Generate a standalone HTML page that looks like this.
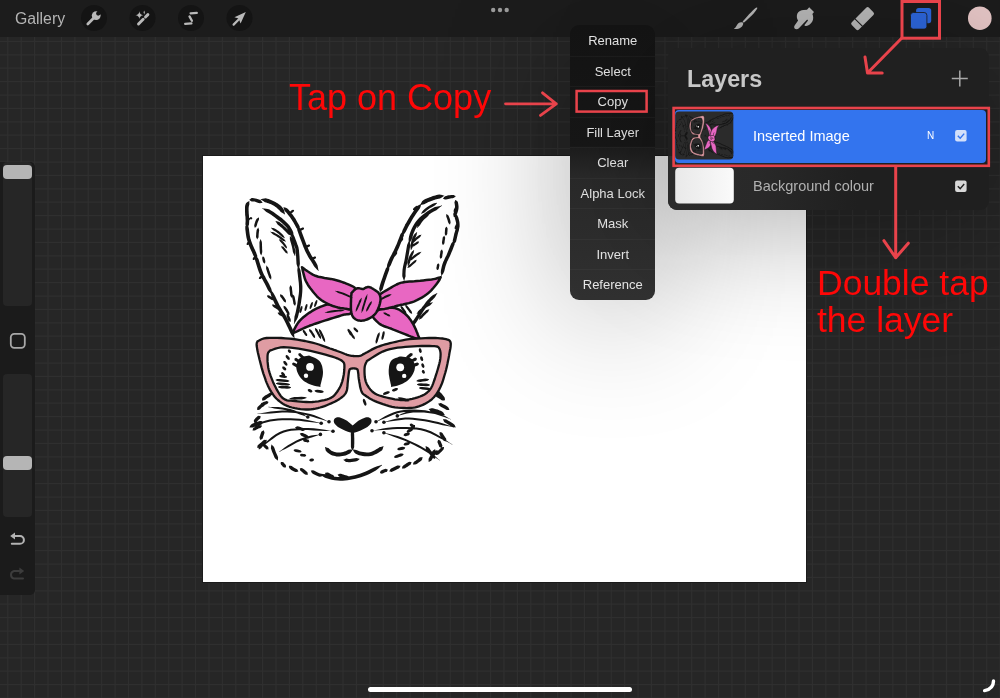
<!DOCTYPE html>
<html><head><meta charset="utf-8">
<style>
*{margin:0;padding:0;box-sizing:border-box}
html,body{width:1000px;height:698px;overflow:hidden;background:#262626;font-family:"Liberation Sans",sans-serif}
svg{position:absolute;left:0;top:0}
#canvas{position:absolute;left:203px;top:156px;width:603px;height:426px;background:#fff;box-shadow:0 0 0 1px #1b1b1b}
#topbar{position:absolute;left:0;top:0;width:1000px;height:37px;background:#1c1c1c}
.gal{position:absolute;left:15px;top:9.5px;font-size:15.8px;color:#b4b4b4}
#sidebar{position:absolute;left:0;top:162px;width:34.5px;height:432.5px;background:#1b1b1b;border-radius:0 5px 5px 0}
.track{position:absolute;left:3px;width:29px;background:#262626;border-radius:4px}
.thumb{position:absolute;left:3px;width:29px;height:14px;background:#b5b5b5;border-radius:4px}
#menu{position:absolute;left:569.5px;top:25px;width:85.5px;height:274.5px;border-radius:9px;overflow:hidden;
 background:linear-gradient(#141414 0,#171717 121px,#1d1d1d 123px,#292929 152px,#313131 274px);box-shadow:0 15px 130px rgba(0,0,0,.32)}
.mi{position:absolute;left:0;width:85.5px;height:30.5px;text-align:center;color:#e6e6e6;font-size:13px;line-height:30.5px;border-top:1px solid rgba(255,255,255,0.035)}
.mi:first-child{border-top:none}
#panel{position:absolute;left:667.5px;top:48px;width:321px;height:162px;border-radius:9px;background:#202020;box-shadow:0 15px 130px rgba(0,0,0,.32)}
.ptitle{position:absolute;left:19.7px;top:17.5px;font-size:23.3px;font-weight:bold;color:#c8c8c8}
#row1{position:absolute;left:7.7px;top:61.9px;width:310.8px;height:53.5px;background:#3374ee;border-radius:4px}
.lt{position:absolute;font-size:14.5px}
.ann{position:absolute;color:#ff0707;font-size:36px;line-height:36px;white-space:nowrap}
.gal,.mi,.lt,.ptitle,.ann{will-change:transform}
#home{position:absolute;left:368px;top:687px;width:264px;height:5px;border-radius:3px;background:#fff}
</style></head><body>
<svg width="1000" height="698"><path d="M7.80 0V698M21.21 0V698M34.62 0V698M48.03 0V698M61.44 0V698M74.85 0V698M88.26 0V698M101.67 0V698M115.08 0V698M128.49 0V698M141.90 0V698M155.31 0V698M168.72 0V698M182.13 0V698M195.54 0V698M208.95 0V698M222.36 0V698M235.77 0V698M249.18 0V698M262.59 0V698M276.00 0V698M289.41 0V698M302.82 0V698M316.23 0V698M329.64 0V698M343.05 0V698M356.46 0V698M369.87 0V698M383.28 0V698M396.69 0V698M410.10 0V698M423.51 0V698M436.92 0V698M450.33 0V698M463.74 0V698M477.15 0V698M490.56 0V698M503.97 0V698M517.38 0V698M530.79 0V698M544.20 0V698M557.61 0V698M571.02 0V698M584.43 0V698M597.84 0V698M611.25 0V698M624.66 0V698M638.07 0V698M651.48 0V698M664.89 0V698M678.30 0V698M691.71 0V698M705.12 0V698M718.53 0V698M731.94 0V698M745.35 0V698M758.76 0V698M772.17 0V698M785.58 0V698M798.99 0V698M812.40 0V698M825.81 0V698M839.22 0V698M852.63 0V698M866.04 0V698M879.45 0V698M892.86 0V698M906.27 0V698M919.68 0V698M933.09 0V698M946.50 0V698M959.91 0V698M973.32 0V698M986.73 0V698M1000.14 0V698M0 1.20H1000M0 14.60H1000M0 28.00H1000M0 41.40H1000M0 54.80H1000M0 68.20H1000M0 81.60H1000M0 95.00H1000M0 108.40H1000M0 121.80H1000M0 135.20H1000M0 148.60H1000M0 162.00H1000M0 175.40H1000M0 188.80H1000M0 202.20H1000M0 215.60H1000M0 229.00H1000M0 242.40H1000M0 255.80H1000M0 269.20H1000M0 282.60H1000M0 296.00H1000M0 309.40H1000M0 322.80H1000M0 336.20H1000M0 349.60H1000M0 363.00H1000M0 376.40H1000M0 389.80H1000M0 403.20H1000M0 416.60H1000M0 430.00H1000M0 443.40H1000M0 456.80H1000M0 470.20H1000M0 483.60H1000M0 497.00H1000M0 510.40H1000M0 523.80H1000M0 537.20H1000M0 550.60H1000M0 564.00H1000M0 577.40H1000M0 590.80H1000M0 604.20H1000M0 617.60H1000M0 631.00H1000M0 644.40H1000M0 657.80H1000M0 671.20H1000M0 684.60H1000M0 698.00H1000" stroke="#2f2f2f" stroke-width="1.25" fill="none"/></svg>
<div id="canvas"></div>
<svg width="1000" height="698" id="art"><defs><g id="bunny">
<path fill="#151515" d="M249.0,200.9L248.6,201.4L247.8,201.8L246.8,202.4L246.0,203.3L245.5,204.4L245.2,205.6L245.0,206.9L245.0,208.1L245.0,209.4L245.0,210.6L245.0,211.9L245.1,213.1L245.1,214.3L245.2,215.5L245.4,216.6L245.5,217.7L245.5,218.9L245.6,220.0L245.6,221.3L245.5,222.8L245.4,224.3L245.8,225.8L246.5,227.1L246.8,228.0L247.2,228.0L247.6,227.2L248.4,226.0L249.0,224.5L249.1,223.0L249.2,221.4L249.2,220.0L249.2,218.7L249.1,217.4L249.0,216.3L248.9,215.1L248.8,214.0L248.7,212.9L248.7,211.7L248.6,210.5L248.6,209.4L248.6,208.2L248.7,207.2L248.8,206.4L249.0,205.6L249.3,204.7L249.4,203.7L249.3,202.6L249.3,201.7L249.4,201.1ZM246.3,223.0L246.0,224.5L245.3,226.6L245.3,229.1L245.6,231.6L245.9,234.0L246.2,236.1L246.5,237.8L246.9,239.3L247.3,240.7L247.7,242.0L248.1,243.2L248.6,244.5L249.1,245.9L249.7,247.3L250.3,248.7L250.9,250.0L251.5,251.3L252.1,252.6L252.7,254.0L253.4,255.6L254.2,257.1L255.4,258.3L256.4,259.3L257.0,260.1L257.4,259.9L257.2,259.0L257.2,257.5L257.3,255.8L256.7,254.2L256.1,252.6L255.5,251.2L254.9,249.8L254.2,248.5L253.6,247.1L253.0,245.8L252.5,244.6L252.0,243.3L251.6,242.0L251.1,240.8L250.8,239.6L250.4,238.4L250.1,237.0L249.8,235.5L249.5,233.5L249.2,231.2L248.9,228.7L248.4,226.3L247.3,224.4L246.7,223.0ZM255.3,255.0L255.3,257.1L255.0,260.0L255.9,263.1L256.9,266.3L257.9,269.4L258.9,272.2L259.9,274.4L260.9,276.5L261.9,278.4L262.9,280.2L263.8,281.9L264.8,283.7L265.8,285.8L266.9,288.0L268.0,290.2L269.4,292.0L271.0,293.4L271.9,294.5L272.3,294.3L272.0,292.9L271.8,290.8L271.2,288.6L270.1,286.3L269.1,284.1L268.0,282.1L267.0,280.2L266.0,278.4L265.1,276.6L264.1,274.9L263.2,272.9L262.3,270.8L261.4,268.3L260.4,265.2L259.4,262.0L258.5,259.0L256.8,256.6L255.7,255.0ZM269.8,289.1L270.3,291.2L270.7,294.2L271.8,297.4L273.3,300.7L274.8,303.9L276.2,306.6L277.4,308.9L278.7,311.0L279.8,312.9L281.0,314.6L282.1,316.4L283.1,318.2L284.1,320.1L285.1,322.0L286.1,324.0L287.0,325.9L287.9,327.8L288.7,329.6L289.6,331.4L290.4,333.2L291.5,334.9L292.7,336.4L293.8,337.6L294.3,338.6L294.7,338.4L294.4,337.3L294.3,335.7L294.1,333.8L293.7,331.8L292.9,329.9L292.1,328.0L291.2,326.2L290.3,324.3L289.4,322.4L288.4,320.4L287.3,318.4L286.3,316.4L285.2,314.5L284.1,312.7L282.9,310.9L281.8,309.1L280.6,307.1L279.4,305.0L278.1,302.3L276.6,299.2L275.1,295.9L273.4,292.9L271.4,290.6L270.2,288.9ZM252.1,218.9L252.3,218.2L252.1,217.7L251.7,217.4L251.3,217.0L250.7,217.0L250.1,217.4L249.9,217.6L249.7,218.3L249.9,218.8L250.3,219.1L250.7,219.5L251.3,219.5L251.9,219.1ZM274.1,299.9L273.7,298.7L272.6,297.6L271.2,296.7L269.8,295.8L268.3,295.3L267.1,295.4L266.9,295.6L267.3,296.8L268.4,297.9L269.8,298.8L271.2,299.7L272.7,300.2L273.9,300.1ZM281.1,310.3L280.4,308.9L279.0,307.7L277.2,306.5L275.4,305.3L273.7,304.6L272.2,304.6L272.0,304.8L272.7,306.2L274.1,307.4L275.9,308.6L277.7,309.8L279.4,310.5L280.9,310.5ZM285.9,317.1L285.3,315.9L284.1,314.8L282.4,313.9L280.8,313.0L279.2,312.4L277.9,312.5L277.7,312.9L278.3,314.1L279.5,315.2L281.2,316.1L282.8,317.0L284.4,317.6L285.7,317.5ZM249.2,200.1L249.8,200.3L250.7,200.9L251.7,201.5L252.7,201.5L253.7,201.5L254.7,201.6L255.8,201.9L257.1,202.4L258.5,202.9L259.9,203.3L261.4,202.9L262.4,202.8L262.6,202.4L261.9,201.7L261.1,200.4L259.7,199.7L258.2,199.2L256.7,198.7L255.3,198.4L254.0,198.2L252.8,198.1L251.6,198.1L250.6,198.7L249.8,199.4L249.2,199.7ZM260.6,199.4L261.3,199.7L262.4,200.5L263.6,201.3L264.9,202.2L266.2,202.6L267.4,202.9L268.4,203.3L269.5,203.7L270.5,204.1L271.5,204.6L272.4,205.0L273.4,205.6L274.3,206.1L275.2,206.7L276.1,207.3L276.9,208.0L277.7,208.7L278.5,209.4L279.4,210.3L280.3,211.5L281.6,212.4L283.0,213.3L284.1,214.0L284.9,214.6L285.1,214.4L284.8,213.5L284.5,212.2L284.1,210.6L283.5,209.0L282.5,207.7L281.5,206.6L280.5,205.6L279.5,204.8L278.5,204.0L277.5,203.3L276.5,202.7L275.4,202.0L274.3,201.4L273.2,200.9L272.1,200.4L271.0,199.9L269.8,199.5L268.6,199.1L267.3,198.7L265.8,198.3L264.2,198.5L262.7,198.8L261.5,199.0L260.6,199.0ZM283.5,207.3L283.8,208.2L284.1,209.5L284.7,210.9L285.7,212.0L286.7,213.1L287.6,214.2L288.4,215.2L289.2,216.2L290.0,217.2L290.7,218.3L291.5,219.4L292.3,220.8L293.3,222.3L294.4,224.2L295.5,226.2L296.5,228.2L298.3,229.3L299.4,230.2L299.8,230.0L299.7,228.6L299.7,226.4L298.7,224.5L297.5,222.5L296.4,220.5L295.5,218.8L294.6,217.5L293.7,216.2L292.9,215.0L292.1,214.0L291.3,212.9L290.4,211.8L289.4,210.7L288.4,209.5L287.3,208.4L285.9,207.8L284.6,207.5L283.7,207.1ZM296.8,224.1L297.1,226.5L297.2,230.1L298.6,233.9L300.0,237.9L301.4,241.5L302.5,244.6L303.4,246.9L304.2,248.8L304.9,250.5L305.6,252.0L306.4,253.5L307.2,255.1L308.1,256.7L309.1,258.4L310.2,260.0L311.2,261.5L312.1,262.9L312.9,264.3L313.7,265.7L314.6,267.1L315.8,268.3L316.9,269.4L317.8,270.3L318.3,271.1L318.7,270.9L318.4,270.1L318.2,268.8L317.9,267.2L317.6,265.5L316.9,264.0L316.1,262.5L315.2,261.0L314.2,259.5L313.2,258.0L312.2,256.4L311.3,254.9L310.4,253.3L309.6,251.8L308.9,250.4L308.3,249.0L307.6,247.4L306.8,245.5L305.9,243.2L304.8,240.3L303.4,236.6L302.0,232.7L300.7,228.9L298.6,226.0L297.2,223.9ZM262.2,208.5L263.0,208.9L264.0,209.8L265.2,210.9L266.4,212.0L267.8,212.8L269.1,213.6L270.3,214.3L271.5,215.1L272.7,215.9L273.9,216.8L275.2,217.8L276.7,218.9L278.3,220.2L280.1,221.6L281.9,223.1L283.7,224.7L285.3,226.2L286.7,227.8L287.8,229.6L289.0,231.6L290.1,233.7L291.6,235.5L292.9,237.0L293.7,238.2L294.1,238.0L293.7,236.7L293.5,234.6L293.2,232.2L292.2,229.9L290.9,227.7L289.5,225.6L287.9,223.7L286.1,222.0L284.3,220.3L282.4,218.8L280.6,217.4L278.9,216.1L277.5,214.9L276.1,213.9L274.8,212.9L273.5,212.0L272.2,211.2L270.9,210.4L269.5,209.6L267.9,209.0L266.1,208.7L264.6,208.6L263.3,208.4L262.4,208.1ZM290.8,232.1L291.0,233.6L290.9,235.8L291.6,238.2L292.5,240.5L293.3,242.7L293.9,244.6L294.4,245.9L294.8,246.8L295.0,247.5L295.2,248.2L295.4,249.2L295.6,250.9L295.9,253.4L296.1,256.8L296.3,260.4L296.5,264.0L297.5,267.0L298.3,269.1L298.7,269.1L299.3,266.9L299.9,263.8L299.7,260.2L299.5,256.5L299.2,253.2L299.0,250.5L298.7,248.7L298.5,247.4L298.2,246.4L297.9,245.6L297.5,244.7L297.1,243.4L296.4,241.6L295.6,239.4L294.7,237.0L293.6,234.8L292.1,233.2L291.2,231.9ZM297.8,264.0L297.7,266.6L297.3,270.3L297.8,274.6L298.3,278.9L298.8,283.1L299.0,286.5L299.1,289.2L299.0,291.5L298.8,293.7L298.5,295.7L298.2,297.7L297.9,299.9L297.6,302.0L297.3,304.2L296.9,306.2L296.5,308.3L296.1,310.3L295.7,312.3L295.1,314.4L294.5,316.5L294.3,318.8L294.1,320.9L294.1,322.7L293.8,323.9L294.2,324.1L294.7,322.9L295.6,321.4L296.8,319.5L297.8,317.5L298.4,315.2L298.9,313.1L299.4,311.0L299.8,309.0L300.2,306.9L300.6,304.7L301.0,302.5L301.3,300.3L301.6,298.2L301.9,296.2L302.1,294.0L302.3,291.8L302.4,289.2L302.4,286.3L302.1,282.8L301.6,278.5L301.1,274.1L300.4,269.9L299.0,266.4L298.2,264.0ZM275.4,221.1L276.0,222.0L276.8,223.3L277.8,224.7L279.2,225.8L280.6,226.9L282.0,228.1L283.4,229.5L285.0,231.1L286.7,232.8L288.3,234.4L290.2,235.2L291.5,235.9L291.7,235.7L291.1,234.4L290.3,232.5L288.9,230.7L287.2,229.0L285.5,227.3L284.0,225.9L282.6,224.6L281.1,223.4L279.7,222.2L278.0,221.6L276.6,221.3L275.6,220.9ZM270.9,228.0L271.6,228.5L272.4,229.5L273.5,230.5L274.9,231.3L276.2,232.1L277.3,232.9L278.5,233.8L279.8,234.9L281.0,236.1L282.3,237.1L283.7,237.7L284.6,238.2L284.8,238.0L284.3,237.1L283.6,235.8L282.6,234.5L281.3,233.3L279.9,232.1L278.7,231.1L277.4,230.2L276.0,229.3L274.6,228.5L273.2,228.1L271.9,227.9L271.1,227.6ZM270.3,232.0L271.1,232.6L272.0,233.6L273.2,234.5L274.6,235.3L276.1,236.1L277.4,236.9L278.7,237.8L280.2,238.9L281.7,240.0L283.2,240.9L284.7,241.3L285.7,241.7L285.9,241.5L285.2,240.6L284.3,239.3L283.0,238.2L281.5,237.1L280.0,236.0L278.6,235.1L277.2,234.2L275.7,233.4L274.2,232.6L272.8,232.1L271.4,231.9L270.5,231.6ZM278.9,239.4L279.2,239.9L279.6,240.7L280.1,241.6L280.8,242.3L281.5,243.0L282.2,243.7L282.9,244.5L283.6,245.5L284.4,246.6L285.2,247.5L286.2,248.1L286.9,248.6L287.1,248.4L286.9,247.6L286.7,246.5L286.1,245.4L285.3,244.3L284.5,243.2L283.8,242.3L283.0,241.5L282.2,240.7L281.4,240.0L280.5,239.6L279.6,239.4L279.1,239.2ZM281.2,246.3L281.4,246.7L281.5,247.3L281.7,248.0L282.2,248.6L282.7,249.1L283.2,249.7L283.8,250.4L284.4,251.2L285.1,252.1L285.8,253.0L286.8,253.3L287.5,253.7L287.7,253.5L287.5,252.8L287.5,251.7L286.8,250.8L286.1,249.9L285.4,249.1L284.8,248.3L284.2,247.7L283.7,247.1L283.2,246.6L282.4,246.4L281.8,246.3L281.4,246.1ZM258.7,217.4L258.3,217.8L257.5,218.2L256.7,218.8L256.2,219.6L255.7,220.6L255.3,221.5L255.0,222.6L254.6,223.7L254.3,224.9L254.2,226.0L254.6,227.0L254.7,227.8L255.1,227.8L255.5,227.3L256.4,226.5L256.8,225.5L257.1,224.4L257.4,223.3L257.7,222.5L258.0,221.7L258.4,220.8L258.9,220.0L259.0,219.1L259.0,218.2L259.1,217.6ZM258.1,227.8L257.8,228.3L257.2,229.0L256.7,229.8L256.5,230.8L256.4,231.8L256.2,232.9L256.2,234.0L256.1,235.2L256.0,236.4L256.2,237.6L256.8,238.6L257.0,239.3L257.4,239.3L257.7,238.6L258.4,237.7L258.6,236.5L258.6,235.3L258.7,234.1L258.8,233.1L258.9,232.2L259.0,231.2L259.2,230.2L258.9,229.3L258.6,228.4L258.5,227.8ZM260.4,239.3L260.2,240.1L259.7,241.3L259.4,242.7L259.5,244.1L259.5,245.6L259.5,247.0L259.6,248.5L259.7,250.1L259.8,251.7L260.0,253.2L260.7,254.4L261.0,255.3L261.4,255.3L261.6,254.4L262.1,253.1L262.3,251.6L262.2,250.0L262.1,248.4L262.1,247.0L262.0,245.6L262.0,244.1L261.9,242.6L261.6,241.3L261.0,240.1L260.8,239.3ZM262.7,256.5L262.2,257.6L262.2,258.8L262.5,260.3L262.9,261.7L263.5,262.8L264.4,263.4L264.8,263.4L265.3,262.3L265.3,261.1L265.0,259.6L264.6,258.2L264.0,257.1L263.1,256.5ZM266.2,265.8L266.3,266.5L266.1,267.6L266.1,268.8L266.5,270.0L266.9,271.2L267.3,272.4L267.7,273.7L268.2,275.1L268.7,276.5L269.3,277.9L270.3,278.8L270.8,279.6L271.2,279.4L271.2,278.5L271.4,277.2L271.1,275.7L270.6,274.3L270.1,272.9L269.7,271.6L269.3,270.4L268.9,269.2L268.5,268.0L267.8,267.0L267.0,266.3L266.6,265.6ZM290.2,285.2L290.1,285.9L289.7,286.8L289.4,287.8L289.5,288.9L289.6,290.0L289.7,291.1L289.9,292.3L290.0,293.6L290.1,294.9L290.4,296.1L291.1,297.1L291.4,297.8L291.8,297.8L292.0,297.0L292.5,295.9L292.6,294.7L292.5,293.3L292.4,292.0L292.3,290.9L292.1,289.8L292.0,288.6L291.9,287.5L291.5,286.6L290.9,285.8L290.6,285.2ZM292.5,294.4L292.4,295.1L292.1,296.1L292.1,297.1L292.3,298.2L292.6,299.3L292.8,300.2L293.0,301.3L293.2,302.3L293.3,303.5L293.8,304.5L294.5,305.2L294.8,305.8L295.2,305.8L295.3,305.1L295.8,304.1L295.8,303.0L295.6,301.9L295.4,300.8L295.2,299.8L295.0,298.7L294.8,297.6L294.5,296.5L294.0,295.6L293.3,294.9L292.9,294.4ZM280.0,294.5L280.1,295.0L280.1,295.9L280.4,296.7L281.0,297.4L281.5,298.1L282.0,298.7L282.5,299.4L283.0,300.2L283.5,301.1L284.2,301.8L285.1,302.2L285.7,302.5L285.9,302.3L285.9,301.7L286.0,300.7L285.7,299.8L285.1,298.9L284.6,298.0L284.0,297.3L283.5,296.5L282.9,295.8L282.3,295.1L281.6,294.7L280.7,294.5L280.2,294.3ZM283.5,305.9L283.6,306.5L283.6,307.4L283.8,308.3L284.4,309.1L284.9,309.9L285.4,310.7L285.9,311.5L286.4,312.4L287.0,313.4L287.6,314.2L288.6,314.7L289.1,315.1L289.5,314.9L289.4,314.2L289.5,313.2L289.2,312.2L288.6,311.2L288.1,310.2L287.6,309.3L287.0,308.5L286.5,307.7L285.9,306.9L285.1,306.3L284.2,306.0L283.7,305.7ZM286.8,314.0L286.6,315.2L286.8,316.8L287.5,318.4L288.2,320.0L289.1,321.3L290.2,322.0L290.6,321.8L290.8,320.6L290.6,319.0L289.9,317.4L289.2,315.8L288.3,314.5L287.2,313.8ZM300.2,313.0L301.0,312.4L301.6,311.2L302.0,309.8L302.4,308.4L302.5,307.1L302.2,306.0L301.8,306.0L301.0,306.6L300.4,307.8L300.0,309.2L299.6,310.6L299.5,311.9L299.8,313.0ZM305.2,311.0L306.0,310.4L306.6,309.2L307.0,307.8L307.4,306.4L307.5,305.1L307.2,304.0L306.8,304.0L306.0,304.6L305.4,305.8L305.0,307.2L304.6,308.6L304.5,309.9L304.8,311.0ZM310.2,309.1L311.0,308.4L311.7,307.3L312.2,305.9L312.7,304.4L312.9,303.1L312.7,302.1L312.3,301.9L311.5,302.6L310.8,303.7L310.3,305.1L309.8,306.6L309.6,307.9L309.8,308.9ZM314.7,307.1L315.5,306.4L316.2,305.3L316.7,303.9L317.2,302.4L317.4,301.1L317.2,300.1L316.8,299.9L316.0,300.6L315.3,301.7L314.8,303.1L314.3,304.6L314.1,305.9L314.3,306.9ZM455.6,196.1L454.8,195.8L453.8,195.1L452.5,194.9L451.2,195.0L449.9,195.2L448.7,195.3L447.5,195.6L446.3,195.9L445.1,196.2L444.2,196.9L443.5,197.9L443.0,198.4L443.0,198.8L443.8,198.9L444.9,199.4L446.0,199.5L447.2,199.2L448.3,198.9L449.3,198.7L450.4,198.5L451.6,198.3L452.8,198.2L454.0,197.8L454.9,197.0L455.6,196.5ZM444.2,195.5L443.3,195.4L442.2,195.1L440.8,194.7L439.3,194.5L437.8,194.7L436.5,195.0L435.3,195.4L434.1,195.7L432.9,196.1L431.8,196.5L430.7,196.9L429.7,197.3L428.7,197.7L427.8,198.0L426.8,198.4L425.9,198.8L424.9,199.2L424.0,199.7L423.0,200.4L422.1,201.2L421.5,202.4L420.9,203.4L420.4,204.4L420.0,204.9L420.2,205.1L420.8,204.9L421.8,204.7L423.0,204.4L424.2,204.2L425.2,203.8L426.0,203.3L426.8,202.9L427.5,202.5L428.4,202.1L429.2,201.8L430.1,201.5L431.1,201.1L432.1,200.7L433.2,200.3L434.2,200.0L435.3,199.6L436.4,199.3L437.5,199.0L438.7,198.7L440.0,198.4L441.3,197.7L442.5,196.9L443.5,196.2L444.2,195.9ZM421.2,203.7L420.1,204.4L418.5,205.3L416.8,206.5L415.5,208.3L414.2,210.1L412.9,211.9L411.7,213.7L410.5,215.6L409.3,217.6L408.1,219.6L407.0,221.6L405.9,223.5L404.8,225.6L403.7,227.8L402.6,230.0L401.9,232.2L401.8,234.3L401.6,235.7L402.0,235.9L403.0,234.8L404.6,233.5L405.9,231.6L406.9,229.4L408.0,227.3L409.1,225.3L410.2,223.4L411.3,221.4L412.4,219.4L413.6,217.5L414.8,215.7L415.9,213.9L417.1,212.2L418.4,210.4L419.7,208.7L420.5,206.9L421.0,205.1L421.4,203.9ZM403.8,229.9L402.5,231.7L400.5,234.0L399.3,237.3L397.9,240.7L396.7,243.9L395.5,246.6L394.5,248.8L393.6,250.8L392.6,252.6L391.7,254.4L390.7,256.2L389.8,258.0L388.9,260.1L388.0,262.3L387.2,264.4L386.9,266.7L386.9,268.6L386.7,269.9L387.1,270.1L387.9,269.0L389.2,267.6L390.5,265.8L391.4,263.7L392.3,261.5L393.2,259.6L394.0,257.8L394.9,256.0L395.8,254.3L396.8,252.4L397.8,250.3L398.9,248.0L400.0,245.2L401.3,242.0L402.7,238.6L403.9,235.4L404.0,232.2L404.2,230.1ZM388.8,264.9L387.3,266.4L385.8,268.6L384.7,271.5L383.6,274.5L382.6,277.5L381.7,280.0L380.9,282.3L380.2,284.6L379.6,286.8L379.1,288.7L379.6,290.6L379.8,292.0L380.2,292.0L381.1,291.0L382.5,289.7L383.1,287.8L383.7,285.7L384.4,283.4L385.1,281.2L386.0,278.7L387.0,275.7L388.1,272.7L389.2,269.8L389.4,267.1L389.2,265.1ZM455.4,200.0L454.9,201.1L454.4,202.5L454.7,203.9L454.9,205.4L455.1,206.9L455.1,208.1L454.8,209.4L454.4,211.0L453.8,212.6L453.2,214.1L453.5,215.7L453.8,216.9L454.2,217.1L455.2,216.4L456.5,215.4L457.1,213.8L457.7,212.0L458.2,210.2L458.5,208.5L458.6,206.7L458.4,205.0L458.1,203.3L457.8,201.8L456.6,200.7L455.8,200.0ZM454.8,213.1L454.8,214.4L454.5,216.4L454.9,218.5L455.5,220.6L456.0,222.6L456.2,224.5L456.1,226.2L455.8,228.0L455.4,229.8L454.9,231.7L454.3,233.6L453.9,235.4L453.5,237.2L453.1,239.0L452.7,240.7L452.8,242.4L453.2,243.9L453.2,245.0L453.6,245.0L454.1,244.1L455.1,243.0L456.1,241.5L456.5,239.8L456.9,238.0L457.3,236.2L457.7,234.5L458.2,232.6L458.8,230.7L459.2,228.6L459.6,226.5L459.6,224.3L459.4,222.1L458.9,219.8L458.3,217.5L457.4,215.5L456.0,214.0L455.2,212.9ZM454.3,239.9L453.2,241.3L451.4,243.2L450.3,245.8L449.2,248.6L448.1,251.2L447.2,253.5L446.4,255.4L445.5,257.1L444.7,258.8L444.0,260.4L443.2,262.1L442.5,263.9L441.9,266.0L441.4,268.3L440.9,270.5L440.8,272.7L441.2,274.6L441.3,276.0L441.7,276.0L442.3,274.8L443.4,273.2L444.3,271.3L444.8,269.1L445.3,266.9L445.9,265.1L446.5,263.4L447.1,261.8L447.9,260.3L448.7,258.6L449.5,256.9L450.4,254.9L451.4,252.6L452.5,249.9L453.6,247.1L454.6,244.5L454.5,241.9L454.7,240.1ZM441.8,205.3L440.2,205.9L437.7,206.4L434.9,207.1L432.1,208.5L429.5,210.0L427.1,211.4L425.1,212.9L423.1,214.4L421.3,216.0L419.5,217.6L417.9,219.3L416.4,221.0L415.1,222.7L414.0,224.4L413.0,226.2L412.1,228.0L411.3,229.8L410.5,231.8L409.7,234.0L409.0,236.4L408.6,239.0L408.7,241.5L408.7,243.5L408.5,245.0L408.9,245.0L409.4,243.7L410.3,241.8L411.4,239.7L412.4,237.4L413.0,235.0L413.7,233.0L414.5,231.2L415.2,229.5L416.1,227.9L417.0,226.3L418.0,224.7L419.2,223.2L420.5,221.7L422.0,220.1L423.6,218.6L425.3,217.1L427.2,215.7L429.1,214.4L431.2,213.0L433.8,211.6L436.4,210.2L438.7,208.3L440.6,206.7L442.0,205.7ZM409.3,240.0L408.4,242.0L407.1,244.9L406.5,248.4L405.9,252.1L405.3,255.6L404.8,258.5L404.4,260.8L403.9,262.7L403.5,264.5L403.1,266.2L402.8,268.0L402.5,269.8L402.4,271.9L402.3,274.1L402.3,276.2L403.0,278.2L403.6,279.8L403.9,281.0L404.3,281.0L404.5,279.8L405.0,278.1L405.6,276.2L405.5,274.1L405.6,272.0L405.7,270.2L405.9,268.5L406.2,266.9L406.6,265.3L407.1,263.5L407.5,261.4L408.0,259.1L408.5,256.2L409.1,252.7L409.7,249.0L410.3,245.4L409.9,242.3L409.7,240.0ZM421.2,234.6L420.5,234.9L419.4,235.1L418.3,235.7L417.2,236.5L416.2,237.3L415.3,238.2L414.3,239.0L413.3,240.0L412.3,240.9L411.6,242.0L411.2,243.1L410.8,243.8L411.0,244.0L411.7,243.6L412.9,243.3L413.9,242.5L414.9,241.6L415.8,240.7L416.7,239.8L417.7,239.1L418.7,238.2L419.7,237.4L420.5,236.5L421.0,235.5L421.4,234.8ZM418.9,241.5L418.4,241.5L417.6,241.5L416.8,241.7L416.2,242.2L415.5,242.7L414.9,243.1L414.3,243.5L413.6,243.9L413.0,244.3L412.5,244.9L412.3,245.7L412.0,246.1L412.2,246.3L412.7,246.3L413.4,246.4L414.2,246.2L414.8,245.8L415.5,245.3L416.1,244.9L416.7,244.5L417.4,244.0L418.1,243.6L418.6,243.0L418.8,242.2L419.1,241.7ZM421.2,251.8L420.4,252.0L419.2,252.2L417.9,252.7L416.7,253.5L415.5,254.3L414.3,255.1L413.2,256.0L412.0,256.9L410.7,257.9L409.7,259.0L409.1,260.2L408.6,261.0L408.8,261.2L409.6,260.8L410.9,260.5L412.2,259.7L413.4,258.7L414.6,257.7L415.7,256.9L416.8,256.1L417.9,255.3L419.1,254.6L420.1,253.6L420.8,252.6L421.4,252.0ZM416.6,259.8L415.9,260.1L414.9,260.3L413.9,260.9L413.0,261.7L412.1,262.4L411.3,263.2L410.5,263.9L409.6,264.6L408.7,265.4L408.1,266.2L407.7,267.2L407.4,267.8L407.6,268.0L408.2,267.8L409.2,267.5L410.2,267.1L411.1,266.3L411.9,265.6L412.7,264.8L413.6,264.1L414.5,263.3L415.4,262.6L416.1,261.7L416.4,260.6L416.8,260.0ZM446.3,214.2L446.3,214.8L446.2,215.7L446.3,216.7L446.6,217.6L447.0,218.5L447.3,219.4L447.6,220.3L447.8,221.3L448.1,222.3L448.6,223.2L449.3,223.9L449.7,224.4L450.1,224.4L450.2,223.7L450.6,222.7L450.5,221.7L450.3,220.6L450.0,219.6L449.7,218.6L449.4,217.7L449.0,216.7L448.6,215.7L447.9,215.0L447.1,214.5L446.7,214.0ZM446.3,226.7L446.1,227.1L445.5,227.7L445.1,228.5L445.1,229.3L445.0,230.1L444.9,230.9L444.9,231.7L444.8,232.7L444.8,233.6L444.9,234.5L445.5,235.2L445.7,235.8L446.1,235.8L446.4,235.3L447.0,234.6L447.3,233.7L447.3,232.8L447.4,231.9L447.5,231.1L447.5,230.3L447.6,229.5L447.6,228.6L447.4,227.9L446.9,227.2L446.7,226.7ZM444.0,235.8L443.8,236.2L443.2,236.7L442.7,237.4L442.6,238.2L442.5,239.0L442.4,239.8L442.2,240.7L442.1,241.6L442.0,242.6L442.1,243.5L442.6,244.4L442.8,245.0L443.2,245.0L443.5,244.5L444.2,243.8L444.5,242.9L444.6,241.9L444.7,241.0L444.8,240.2L445.0,239.4L445.1,238.6L445.2,237.8L444.9,237.0L444.5,236.3L444.4,235.8ZM441.7,249.6L441.4,250.0L440.8,250.6L440.4,251.3L440.3,252.2L440.2,253.0L440.1,253.8L439.9,254.7L439.8,255.6L439.7,256.5L439.8,257.4L440.3,258.2L440.5,258.8L440.9,258.8L441.2,258.3L441.9,257.7L442.2,256.8L442.3,255.9L442.4,255.0L442.5,254.2L442.7,253.4L442.8,252.5L442.9,251.7L442.7,250.9L442.2,250.1L442.1,249.6ZM438.3,263.4L437.4,264.0L436.9,265.1L436.7,266.5L436.4,267.8L436.5,269.0L437.1,270.0L437.5,270.0L438.4,269.4L438.9,268.3L439.1,266.9L439.4,265.6L439.3,264.4L438.7,263.4ZM437.2,293.1L436.2,293.6L434.8,294.3L433.1,295.0L431.5,296.2L430.1,297.5L428.8,298.9L427.7,300.1L426.6,301.3L425.6,302.6L424.6,303.9L423.5,305.4L422.2,307.1L420.8,309.2L419.2,311.6L417.5,314.2L415.9,316.7L414.4,319.0L413.0,320.9L411.9,322.5L410.7,323.9L410.1,325.4L409.5,326.8L409.0,327.9L408.6,328.7L408.8,328.9L409.5,328.3L410.6,327.7L411.9,327.0L413.3,326.0L414.5,324.6L415.8,322.9L417.2,320.9L418.7,318.5L420.4,316.0L422.0,313.5L423.6,311.1L425.0,309.1L426.2,307.4L427.3,305.9L428.2,304.7L429.2,303.5L430.2,302.3L431.2,301.1L432.4,299.9L433.8,298.6L435.0,297.2L436.0,295.6L436.7,294.2L437.4,293.3ZM432.6,302.2L431.7,302.5L430.3,302.7L428.7,303.2L427.2,304.0L425.7,305.0L424.3,306.0L422.8,307.1L421.2,308.4L419.6,309.8L418.1,311.2L417.3,312.8L416.6,313.8L416.8,314.0L417.9,313.5L419.6,312.9L421.2,311.7L422.8,310.4L424.3,309.1L425.7,308.0L427.1,307.1L428.5,306.2L430.0,305.4L431.2,304.3L432.1,303.2L432.8,302.6ZM429.2,309.2L428.5,309.5L427.3,309.8L426.1,310.3L425.1,311.3L424.1,312.2L423.1,313.1L422.2,314.1L421.2,315.2L420.2,316.3L419.5,317.4L419.2,318.7L418.9,319.5L419.1,319.7L419.9,319.3L421.1,318.8L422.1,317.9L423.1,316.8L424.0,315.8L424.9,314.9L425.8,314.0L426.8,313.1L427.8,312.3L428.5,311.2L429.0,310.1L429.4,309.4ZM400.5,305.9L400.6,306.5L400.6,307.4L400.9,308.3L401.5,309.1L402.1,309.9L402.6,310.7L403.1,311.4L403.7,312.1L404.2,312.9L405.0,313.4L405.8,313.7L406.3,314.0L406.5,313.8L406.4,313.3L406.3,312.4L406.0,311.5L405.5,310.8L404.9,310.1L404.4,309.3L403.9,308.6L403.3,307.8L402.8,307.0L402.1,306.4L401.2,306.0L400.7,305.7ZM405.1,304.8L405.3,305.4L405.4,306.3L405.7,307.2L406.4,308.0L407.0,308.9L407.6,309.7L408.2,310.5L408.9,311.4L409.6,312.4L410.4,313.2L411.4,313.6L412.0,314.0L412.2,313.8L412.0,313.1L411.9,312.0L411.4,311.1L410.7,310.1L410.0,309.2L409.4,308.3L408.8,307.5L408.1,306.7L407.5,305.9L406.7,305.3L405.8,304.9L405.3,304.6ZM348.8,330.1L349.0,330.8L349.0,331.8L349.4,332.8L349.9,333.8L350.5,334.7L351.1,335.6L351.6,336.4L352.1,337.2L352.7,338.0L353.4,338.6L354.2,338.9L354.7,339.3L354.9,339.1L354.8,338.6L354.8,337.7L354.5,336.8L354.0,336.0L353.4,335.2L352.9,334.4L352.4,333.6L351.9,332.6L351.3,331.7L350.6,330.8L349.7,330.3L349.2,329.9ZM347.6,328.9L347.7,329.3L347.5,330.0L347.5,330.7L347.9,331.3L348.2,331.9L348.5,332.5L348.8,333.1L349.2,333.8L349.5,334.5L350.0,335.1L350.7,335.4L351.1,335.7L351.5,335.5L351.5,335.0L351.7,334.2L351.5,333.5L351.2,332.8L350.8,332.1L350.5,331.5L350.2,330.9L349.9,330.3L349.5,329.6L349.0,329.2L348.3,329.0L348.0,328.7ZM353.5,327.7L353.6,328.2L353.6,328.9L353.9,329.5L354.3,329.9L354.8,330.4L355.2,330.8L355.6,331.2L356.0,331.6L356.4,332.0L357.0,332.2L357.6,332.2L358.0,332.3L358.2,332.1L358.1,331.7L358.2,331.1L358.0,330.5L357.6,330.1L357.2,329.6L356.8,329.2L356.4,328.8L355.9,328.3L355.5,327.9L354.9,327.6L354.2,327.6L353.7,327.5ZM379.3,332.2L378.9,332.8L378.1,333.5L377.5,334.4L377.1,335.5L376.8,336.6L376.4,337.7L376.1,338.7L375.8,339.9L375.5,341.0L375.5,342.1L375.8,343.1L375.8,343.8L376.2,343.8L376.5,343.3L377.2,342.5L377.7,341.5L378.0,340.4L378.3,339.3L378.6,338.3L378.9,337.3L379.3,336.3L379.6,335.2L379.8,334.1L379.6,333.1L379.7,332.4ZM383.8,331.0L383.5,331.5L382.8,332.1L382.5,333.0L382.3,334.0L382.1,334.9L381.9,335.8L381.7,336.5L381.5,337.3L381.4,338.0L381.5,338.8L381.8,339.5L381.8,340.0L382.2,340.0L382.4,339.7L383.0,339.2L383.5,338.6L383.7,337.8L383.9,337.0L384.1,336.2L384.3,335.4L384.5,334.4L384.7,333.5L384.7,332.5L384.3,331.6L384.2,331.0ZM302.9,330.1L302.9,330.5L302.8,331.3L302.9,331.9L303.3,332.5L303.7,333.1L304.1,333.6L304.4,334.2L304.8,334.7L305.2,335.3L305.7,335.7L306.5,335.9L306.9,336.1L307.1,335.9L307.1,335.5L307.2,334.7L307.1,334.1L306.7,333.5L306.3,332.9L305.9,332.4L305.6,331.8L305.2,331.3L304.8,330.7L304.3,330.3L303.5,330.1L303.1,329.9ZM308.9,329.1L309.1,329.6L309.1,330.5L309.4,331.4L310.0,332.1L310.6,332.9L311.1,333.6L311.6,334.4L312.2,335.4L312.7,336.3L313.4,337.2L314.3,337.7L314.8,338.1L315.2,337.9L315.0,337.2L315.1,336.2L314.7,335.2L314.1,334.2L313.5,333.2L312.9,332.4L312.4,331.6L311.8,330.8L311.2,330.0L310.4,329.5L309.6,329.2L309.1,328.9ZM314.9,328.1L315.0,328.7L315.1,329.7L315.4,330.7L315.9,331.6L316.5,332.6L317.0,333.5L317.5,334.5L318.1,335.6L318.7,336.8L319.4,337.8L320.3,338.5L320.8,339.1L321.2,338.9L321.0,338.2L321.1,337.0L320.7,335.8L320.1,334.6L319.5,333.5L319.0,332.5L318.4,331.5L317.8,330.5L317.3,329.5L316.5,328.8L315.6,328.3L315.1,327.9ZM318.8,329.1L319.0,329.8L319.0,330.9L319.3,332.1L319.9,333.2L320.5,334.4L321.0,335.5L321.5,336.6L322.1,338.0L322.7,339.3L323.3,340.5L324.3,341.4L324.8,342.1L325.2,341.9L325.1,341.1L325.1,339.8L324.7,338.4L324.1,337.1L323.6,335.7L323.0,334.5L322.5,333.4L321.9,332.2L321.3,331.1L320.5,330.1L319.6,329.5L319.2,328.9ZM436.9,202.8L435.8,203.1L434.1,203.3L432.3,204.0L430.6,205.0L428.8,206.0L427.3,207.0L425.9,208.0L424.4,209.2L423.1,210.4L422.1,211.7L421.5,213.0L420.9,213.9L421.1,214.1L422.0,213.6L423.4,213.1L424.8,212.3L426.1,211.1L427.4,210.0L428.7,209.0L430.1,208.1L431.8,207.2L433.5,206.2L435.1,205.2L436.2,203.9L437.1,203.2ZM429.9,212.9L428.8,213.4L427.1,213.9L425.5,215.0L423.9,216.4L422.4,217.8L421.0,219.2L419.9,220.6L418.9,222.2L417.9,223.8L417.4,225.4L417.2,226.9L416.8,227.9L417.2,228.1L417.9,227.3L419.0,226.3L420.1,225.1L421.0,223.6L422.0,222.1L423.0,220.8L424.1,219.6L425.6,218.3L427.1,217.0L428.5,215.6L429.4,214.1L430.1,213.1ZM416.8,231.9L416.2,232.7L415.1,233.5L414.0,234.8L413.2,236.3L412.4,238.0L411.8,239.6L411.3,241.4L410.9,243.3L410.5,245.3L410.4,247.2L410.7,248.8L410.8,250.0L411.2,250.0L411.7,249.0L412.5,247.5L413.0,245.7L413.3,243.8L413.8,242.0L414.2,240.4L414.8,239.0L415.5,237.4L416.2,236.0L416.7,234.5L416.9,233.0L417.2,232.1ZM413.8,249.9L413.1,250.7L412.0,251.6L411.0,252.9L410.2,254.5L409.4,256.1L408.8,257.6L408.3,259.1L407.9,260.7L407.5,262.2L407.5,263.7L407.8,265.0L407.8,266.0L408.2,266.0L408.6,265.2L409.4,264.1L410.0,262.8L410.3,261.3L410.7,259.8L411.2,258.4L411.7,257.1L412.5,255.6L413.2,254.1L413.8,252.6L413.9,251.1L414.2,250.1ZM271.9,213.1L272.8,214.0L273.9,215.5L275.5,216.6L277.2,217.8L278.8,218.9L280.2,220.0L281.3,221.1L282.5,222.3L283.6,223.7L284.8,224.7L286.1,225.5L286.9,226.1L287.1,225.9L286.7,225.0L286.3,223.6L285.5,222.1L284.4,220.7L283.1,219.3L281.8,218.0L280.3,216.9L278.6,215.7L276.8,214.5L275.0,213.6L273.3,213.2L272.1,212.9ZM289.8,236.1L289.9,237.2L289.8,238.9L290.2,240.7L290.8,242.7L291.3,244.6L291.8,246.3L292.2,248.1L292.6,250.0L292.9,251.9L293.6,253.6L294.4,255.0L294.8,256.0L295.2,256.0L295.2,254.8L295.5,253.2L295.4,251.4L295.1,249.5L294.6,247.5L294.2,245.7L293.7,243.9L293.2,241.9L292.6,240.0L291.8,238.3L290.8,237.0L290.2,235.9ZM417.9,205.9L416.8,205.8L415.8,206.3L414.8,207.1L413.7,207.9L413.1,208.8L412.9,209.9L413.1,210.1L414.2,210.2L415.2,209.7L416.2,208.9L417.3,208.1L417.9,207.2L418.1,206.1ZM409.9,220.9L408.8,221.0L407.7,221.6L406.7,222.7L405.6,223.7L405.0,224.8L404.9,225.9L405.1,226.1L406.2,226.0L407.3,225.4L408.3,224.3L409.4,223.3L410.0,222.2L410.1,221.1ZM402.9,237.9L401.8,238.1L400.9,238.7L400.1,239.8L399.3,240.8L398.8,241.8L398.9,242.9L399.1,243.1L400.2,242.9L401.1,242.3L401.9,241.2L402.7,240.2L403.2,239.2L403.1,238.1ZM396.9,251.9L395.8,252.1L394.9,252.7L394.1,253.8L393.3,254.8L392.8,255.8L392.9,256.9L393.1,257.1L394.2,256.9L395.1,256.3L395.9,255.2L396.7,254.2L397.2,253.2L397.1,252.1ZM456.8,205.9L455.9,206.3L455.0,207.2L454.4,208.5L453.8,209.7L453.6,210.9L453.8,211.9L454.2,212.1L455.1,211.7L456.0,210.8L456.6,209.5L457.2,208.3L457.4,207.1L457.2,206.1ZM457.8,222.9L456.9,223.3L456.0,224.2L455.4,225.5L454.8,226.7L454.6,227.9L454.8,228.9L455.2,229.1L456.1,228.7L457.0,227.8L457.6,226.5L458.2,225.3L458.4,224.1L458.2,223.1ZM454.8,239.9L453.9,240.3L453.0,241.2L452.4,242.5L451.8,243.7L451.6,244.9L451.8,245.9L452.2,246.1L453.1,245.7L454.0,244.8L454.6,243.5L455.2,242.3L455.4,241.1L455.2,240.1ZM249.9,217.9L248.9,217.9L248.0,218.3L247.2,219.2L246.3,220.0L245.9,220.9L245.9,221.9L246.1,222.1L247.1,222.1L248.0,221.7L248.8,220.8L249.7,220.0L250.1,219.1L250.1,218.1ZM249.8,239.9L248.9,240.1L248.1,240.9L247.5,241.9L246.9,242.9L246.6,243.9L246.8,244.9L247.2,245.1L248.1,244.9L248.9,244.1L249.5,243.1L250.1,242.1L250.4,241.1L250.2,240.1ZM255.9,255.9L254.9,256.0L254.2,256.5L253.5,257.3L252.9,258.1L252.7,259.0L252.9,259.9L253.1,260.1L254.1,260.0L254.8,259.5L255.5,258.7L256.1,257.9L256.3,257.0L256.1,256.1ZM262.9,274.9L261.9,274.9L261.0,275.3L260.2,276.2L259.3,277.0L258.9,277.9L258.9,278.9L259.1,279.1L260.1,279.1L261.0,278.7L261.8,277.8L262.7,277.0L263.1,276.1L263.1,275.1ZM290.1,213.1L291.0,213.3L291.9,213.1L292.7,212.5L293.5,211.8L294.0,211.1L294.1,210.1L293.9,209.9L293.0,209.7L292.1,209.9L291.3,210.5L290.5,211.2L290.0,211.9L289.9,212.9ZM300.1,230.2L300.9,230.5L301.7,230.5L302.5,230.1L303.3,229.7L303.9,229.0L304.1,228.2L303.9,227.8L303.1,227.5L302.3,227.5L301.5,227.9L300.7,228.3L300.1,229.0L299.9,229.8ZM306.1,247.2L306.9,247.5L307.7,247.5L308.5,247.1L309.3,246.7L309.9,246.0L310.1,245.2L309.9,244.8L309.1,244.5L308.3,244.5L307.5,244.9L306.7,245.3L306.1,246.0L305.9,246.8ZM312.1,259.2L312.9,259.5L313.7,259.5L314.5,259.1L315.3,258.7L315.9,258.0L316.1,257.2L315.9,256.8L315.1,256.5L314.3,256.5L313.5,256.9L312.7,257.3L312.1,258.0L311.9,258.8Z"/>
<g fill="#e867c2" stroke="#151515" stroke-width="2.5" stroke-linejoin="round"><path d="M292.3,333.1L293.0,331.7L294.0,329.8L295.2,327.6L296.5,325.2L298.0,322.9L299.6,320.9L301.3,319.1L303.3,317.3L305.3,315.7L307.5,314.1L309.6,312.6L311.8,311.2L314.0,309.9L316.3,308.7L318.6,307.6L320.9,306.6L323.1,305.8L325.2,305.1L327.1,304.6L328.9,304.4L330.5,304.2L332.3,304.2L334.1,304.1L336.2,304.0L338.8,303.7L341.7,303.3L344.8,302.8L347.8,302.5L350.3,302.5L352.0,303.0L352.9,304.1L353.2,305.8L353.0,307.8L352.4,309.9L351.7,311.7L351.0,313.0L350.2,313.7L349.3,314.1L348.2,314.2L346.9,314.3L345.3,314.4L343.5,314.8L341.4,315.4L338.9,316.2L336.2,317.0L333.4,317.9L330.5,318.8L327.6,319.7L324.6,320.6L321.5,321.6L318.3,322.7L315.2,323.7L312.2,324.8L309.4,325.8L306.8,326.9L304.2,328.0L301.8,329.2L299.6,330.2L297.6,331.2L296.0,331.9L294.8,332.4L293.9,332.7L293.3,332.9L292.9,333.0L292.6,333.0L292.3,333.1Z"/><path d="M372.0,316.0L372.8,315.2L373.8,314.1L375.1,312.7L376.5,311.4L378.2,310.2L380.0,309.3L382.1,308.7L384.6,308.2L387.2,307.9L389.9,307.7L392.5,307.8L394.9,308.1L397.1,308.8L399.2,309.7L401.2,310.9L403.0,312.2L404.8,313.6L406.4,315.0L407.8,316.4L409.1,317.9L410.2,319.4L411.3,321.0L412.2,322.6L413.2,324.2L414.1,325.9L415.0,327.8L415.9,329.6L416.6,331.5L417.3,333.1L417.8,334.5L418.3,335.7L418.7,336.6L419.0,337.5L419.2,338.1L419.2,338.6L419.0,339.0L418.6,339.2L418.2,339.2L417.5,339.0L416.7,338.7L415.6,338.3L414.4,337.9L412.9,337.3L411.1,336.7L409.1,335.9L407.0,335.0L404.9,334.2L402.9,333.4L401.0,332.6L399.1,331.9L397.2,331.1L395.3,330.3L393.4,329.6L391.5,328.8L389.5,328.1L387.5,327.4L385.5,326.7L383.6,326.0L381.7,325.2L380.0,324.2L378.4,322.9L376.8,321.4L375.3,319.8L373.9,318.3L372.8,316.9L372.0,316.0Z"/><path d="M302.0,267.3L303.4,268.3L305.3,269.7L307.6,271.3L310.2,273.0L312.8,274.6L315.5,275.8L318.3,276.7L321.4,277.3L324.5,277.9L327.7,278.4L330.8,278.9L333.7,279.5L336.4,280.2L339.1,281.0L341.7,281.9L344.1,282.7L346.3,283.6L348.3,284.4L350.0,285.1L351.6,285.8L353.0,286.5L354.1,287.2L355.0,288.1L355.6,289.2L355.9,290.5L355.8,292.1L355.5,293.8L355.0,295.6L354.5,297.3L354.0,299.0L353.6,300.7L353.1,302.6L352.6,304.5L352.1,306.2L351.5,307.6L350.8,308.7L350.2,309.3L349.6,309.5L348.9,309.5L348.1,309.2L347.2,309.0L345.9,308.7L344.3,308.5L342.4,308.2L340.3,307.9L338.0,307.5L335.8,306.9L333.7,306.3L331.6,305.5L329.5,304.6L327.4,303.6L325.3,302.5L323.3,301.4L321.5,300.2L319.9,299.0L318.3,297.6L316.9,296.3L315.6,294.8L314.3,293.3L313.0,291.7L311.7,290.0L310.3,288.3L309.0,286.5L307.8,284.6L306.7,282.7L305.7,280.7L304.8,278.5L304.1,275.9L303.4,273.3L302.8,270.9L302.4,268.8L302.0,267.3Z"/><path d="M440.7,277.2L439.8,277.5L438.6,277.8L437.2,278.2L435.6,278.7L433.7,279.1L431.6,279.5L429.2,279.8L426.3,280.1L423.3,280.4L420.2,280.7L417.2,280.9L414.4,281.2L411.9,281.4L409.5,281.6L407.1,281.8L404.9,282.0L402.7,282.4L400.6,282.9L398.5,283.6L396.6,284.5L394.7,285.5L392.8,286.5L391.0,287.6L389.2,288.7L387.3,289.8L385.4,290.9L383.5,292.0L381.7,293.1L380.2,294.3L379.0,295.5L378.2,296.7L377.7,298.0L377.5,299.3L377.4,300.6L377.4,301.8L377.5,303.0L377.5,304.2L377.5,305.6L377.6,306.8L377.9,308.0L378.7,308.8L380.0,309.3L382.0,309.3L384.6,308.9L387.7,308.2L390.9,307.4L394.2,306.6L397.2,305.8L400.1,305.1L403.1,304.5L406.0,303.8L408.9,303.1L411.7,302.3L414.4,301.3L416.9,300.2L419.4,298.9L421.8,297.6L424.0,296.2L426.1,294.7L428.1,293.2L430.0,291.6L431.7,289.8L433.3,288.0L434.8,286.2L436.2,284.5L437.3,283.0L438.2,281.7L439.0,280.5L439.6,279.5L440.0,278.5L440.4,277.8L440.7,277.2Z"/><path d="M351.5,293.0L351.9,292.6L352.4,292.0L353.1,291.3L353.7,290.6L354.4,290.0L355.0,289.5L355.5,289.1L356.0,288.8L356.5,288.6L356.9,288.4L357.5,288.3L358.1,288.2L358.8,288.2L359.7,288.4L360.6,288.6L361.4,288.8L362.3,289.0L363.0,289.0L363.6,288.9L364.1,288.6L364.6,288.3L365.0,288.0L365.5,287.7L366.0,287.5L366.6,287.4L367.1,287.2L367.7,287.1L368.3,287.1L368.9,287.1L369.6,287.2L370.3,287.4L371.0,287.7L371.7,288.1L372.5,288.5L373.2,289.0L374.0,289.5L374.8,290.0L375.7,290.6L376.6,291.2L377.4,291.8L378.2,292.5L378.8,293.2L379.3,293.9L379.7,294.7L380.0,295.5L380.2,296.3L380.4,297.1L380.5,298.0L380.6,298.9L380.5,299.8L380.5,300.7L380.3,301.6L380.1,302.6L379.9,303.6L379.6,304.6L379.3,305.7L378.9,306.8L378.4,307.9L378.0,309.0L377.5,310.0L377.0,310.9L376.6,311.8L376.1,312.6L375.5,313.5L374.9,314.2L374.2,315.0L373.3,315.8L372.4,316.5L371.3,317.2L370.2,317.9L369.1,318.5L368.0,319.0L366.9,319.5L365.9,319.8L364.8,320.2L363.7,320.4L362.6,320.6L361.6,320.7L360.6,320.7L359.6,320.6L358.6,320.4L357.7,320.2L356.8,319.9L356.0,319.5L355.3,319.1L354.6,318.6L354.0,318.1L353.4,317.4L352.9,316.8L352.5,316.0L352.1,315.2L351.8,314.3L351.5,313.4L351.3,312.4L351.1,311.3L351.0,310.0L350.9,308.5L350.9,306.9L350.9,305.1L350.9,303.3L351.0,301.5L351.0,300.0L351.1,298.6L351.1,297.2L351.2,295.9L351.4,294.7L351.4,293.7L351.5,293.0Z"/></g>
<path fill="#151515" d="M335.1,291.2L336.1,291.6L337.3,292.5L338.8,293.2L340.5,293.7L342.1,294.3L343.7,294.9L345.1,295.5L346.8,296.2L348.4,296.9L349.9,297.5L351.4,297.7L352.3,298.0L352.5,297.6L351.6,297.1L350.6,296.1L349.1,295.2L347.5,294.5L345.9,293.8L344.3,293.1L342.8,292.5L341.1,291.9L339.4,291.4L337.7,291.0L336.3,291.0L335.3,290.8ZM324.9,312.9L326.1,312.8L327.7,313.0L329.5,312.8L331.5,312.5L333.4,312.2L335.1,311.9L336.8,311.8L338.6,311.6L340.4,311.5L342.0,311.2L343.4,310.8L344.4,310.6L344.4,310.2L343.4,310.1L342.0,309.8L340.3,309.6L338.5,309.7L336.6,309.9L334.9,310.1L333.1,310.3L331.2,310.6L329.2,311.0L327.4,311.4L325.9,312.2L324.9,312.5ZM391.4,294.2L390.6,294.3L389.5,294.3L388.2,294.6L386.9,295.1L385.7,295.6L384.6,296.1L383.6,296.7L382.5,297.3L381.6,297.9L380.9,298.7L380.4,299.5L379.9,300.0L380.1,300.2L380.7,300.0L381.6,299.8L382.6,299.5L383.5,298.9L384.5,298.4L385.4,297.9L386.5,297.4L387.7,296.9L388.9,296.4L390.1,295.8L390.9,295.0L391.6,294.6ZM383.3,312.9L383.6,313.2L384.0,313.9L384.6,314.3L385.3,314.7L385.9,315.0L386.6,315.3L387.2,315.7L387.8,316.0L388.4,316.3L389.1,316.4L389.8,316.3L390.2,316.4L390.4,316.0L390.1,315.7L389.8,315.1L389.3,314.6L388.7,314.3L388.0,314.0L387.4,313.7L386.8,313.3L386.1,313.0L385.4,312.6L384.7,312.5L383.9,312.6L383.5,312.5ZM361.4,297.7L360.9,298.5L360.1,299.4L359.3,300.6L358.7,302.0L358.2,303.4L357.6,304.6L357.1,305.8L356.6,307.1L356.1,308.4L355.8,309.6L355.8,310.8L355.6,311.5L356.0,311.7L356.4,311.0L357.1,310.2L357.8,309.1L358.3,307.8L358.9,306.6L359.4,305.4L359.9,304.1L360.5,302.8L361.1,301.4L361.5,300.0L361.6,298.7L361.8,297.9ZM367.1,294.3L366.7,295.2L365.9,296.4L365.2,297.8L364.6,299.4L364.1,301.1L363.6,302.7L363.1,304.4L362.5,306.2L362.0,308.1L361.6,309.9L361.6,311.5L361.4,312.7L361.8,312.7L362.2,311.7L363.1,310.4L363.8,308.7L364.3,306.8L364.9,304.9L365.4,303.3L365.9,301.7L366.4,300.0L367.0,298.4L367.2,296.8L367.3,295.4L367.5,294.5ZM371.8,301.2L371.3,301.6L370.6,302.1L369.8,302.8L369.3,303.7L368.7,304.6L368.2,305.5L367.7,306.5L367.1,307.6L366.6,308.7L366.2,309.8L366.2,310.8L366.0,311.5L366.4,311.7L366.8,311.1L367.7,310.5L368.3,309.5L368.8,308.4L369.3,307.4L369.8,306.5L370.3,305.6L370.9,304.7L371.4,303.8L371.7,302.9L371.8,302.0L372.0,301.4Z"/>
<path fill="#df9ca3" fill-rule="evenodd" stroke="#151515" stroke-width="2.3" stroke-linejoin="round" d="M257.3,341.5L258.1,341.1L259.2,340.4L260.5,339.7L262.1,339.0L264.1,338.4L266.5,338.0L269.5,337.8L273.1,337.8L277.1,337.8L281.3,338.0L285.4,338.3L289.4,338.6L293.3,339.0L297.2,339.6L301.2,340.3L305.1,341.0L308.8,341.8L312.3,342.6L315.6,343.5L318.9,344.5L322.0,345.6L324.9,346.6L327.6,347.6L330.0,348.5L332.1,349.2L334.0,349.9L335.7,350.4L337.2,351.0L338.6,351.5L340.0,352.0L341.4,352.5L342.6,353.0L343.8,353.5L345.0,354.0L346.1,354.4L347.2,354.8L348.3,355.1L349.3,355.4L350.4,355.6L351.4,355.8L352.4,355.9L353.4,356.0L354.4,356.1L355.5,356.2L356.5,356.2L357.6,356.2L358.6,356.1L359.7,355.9L360.7,355.6L361.6,355.2L362.5,354.7L363.5,354.1L364.7,353.5L366.0,352.8L367.6,352.0L369.3,351.0L371.2,349.9L373.2,348.9L375.3,347.9L377.3,347.0L379.3,346.3L381.2,345.6L383.1,345.0L385.2,344.4L387.5,343.8L390.0,343.2L392.8,342.5L395.8,341.8L399.0,341.0L402.3,340.3L405.8,339.7L409.3,339.2L413.0,338.8L417.0,338.5L421.1,338.3L425.2,338.1L429.0,338.0L432.3,338.0L435.2,338.0L437.9,338.1L440.3,338.3L442.5,338.5L444.4,338.8L446.0,339.2L447.4,339.6L448.4,339.9L449.2,340.3L449.8,340.9L450.3,341.6L450.6,342.6L450.8,343.8L450.7,345.3L450.6,346.9L450.3,348.7L449.9,350.7L449.5,352.9L449.1,355.4L448.6,358.1L448.0,361.1L447.4,364.1L446.7,367.2L446.0,370.1L445.2,373.0L444.3,376.0L443.4,379.1L442.5,382.0L441.4,384.8L440.3,387.3L439.1,389.6L437.9,391.7L436.7,393.7L435.3,395.5L433.9,397.2L432.3,398.8L430.6,400.3L428.7,401.6L426.8,402.8L424.8,403.9L422.8,404.9L420.8,405.7L418.9,406.4L417.2,406.9L415.4,407.4L413.6,407.7L411.5,407.9L409.3,408.0L406.8,408.1L404.0,408.0L401.1,407.9L398.0,407.7L395.0,407.3L392.1,406.8L389.2,406.1L386.1,405.2L383.0,404.2L380.1,403.1L377.4,402.1L375.0,401.1L373.0,400.2L371.2,399.3L369.7,398.5L368.4,397.6L367.1,396.8L366.0,396.0L365.0,395.3L364.1,394.7L363.3,394.1L362.7,393.5L362.1,392.6L361.5,391.5L361.0,390.0L360.5,388.1L360.0,386.1L359.7,383.9L359.3,381.9L359.0,380.0L358.7,378.2L358.5,376.4L358.4,374.7L358.2,373.0L358.0,371.6L357.8,370.5L357.5,369.7L357.2,369.2L356.8,369.0L356.4,368.8L356.0,368.7L355.5,368.6L354.9,368.5L354.2,368.4L353.5,368.4L352.8,368.4L352.1,368.5L351.5,368.6L351.0,368.7L350.6,368.8L350.2,369.0L349.9,369.2L349.6,369.7L349.3,370.5L349.0,371.6L348.8,373.0L348.6,374.6L348.4,376.4L348.2,378.2L348.0,380.0L347.8,381.9L347.6,383.9L347.5,386.0L347.3,388.0L347.0,389.9L346.5,391.5L345.9,392.8L345.2,393.9L344.4,394.9L343.6,395.8L342.6,396.6L341.5,397.5L340.3,398.4L339.1,399.2L337.8,400.1L336.3,400.9L334.7,401.7L333.0,402.5L331.1,403.4L329.0,404.3L326.8,405.2L324.6,406.1L322.3,406.8L320.0,407.5L317.8,408.1L315.5,408.6L313.2,409.0L310.9,409.3L308.5,409.5L306.0,409.5L303.3,409.4L300.5,409.1L297.5,408.7L294.7,408.2L291.9,407.5L289.4,406.8L287.1,405.9L285.1,405.0L283.1,403.9L281.3,402.7L279.6,401.4L277.9,400.0L276.3,398.5L274.9,396.9L273.5,395.2L272.3,393.4L271.1,391.6L269.9,389.6L268.8,387.5L267.8,385.4L266.8,383.1L265.9,380.8L265.1,378.4L264.2,375.9L263.3,373.3L262.5,370.6L261.7,367.9L261.0,365.1L260.3,362.4L259.6,359.8L259.0,357.3L258.4,354.7L257.8,352.2L257.3,349.8L257.0,347.7L256.7,346.0L256.6,344.7L256.7,343.6L256.8,342.9L257.0,342.3L257.2,341.9L257.3,341.5ZM269.9,350.6L271.3,350.2L273.1,349.5L275.4,348.7L277.9,348.0L280.7,347.4L283.7,347.2L287.0,347.3L290.7,347.6L294.6,348.1L298.6,348.7L302.7,349.4L306.6,350.1L310.5,350.9L314.6,351.8L318.7,352.8L322.6,353.8L326.3,354.8L329.5,355.8L332.3,356.7L334.9,357.5L337.1,358.3L339.1,359.2L340.8,360.0L342.2,361.0L343.2,362.0L343.9,362.9L344.2,363.9L344.4,365.0L344.4,366.2L344.4,367.8L344.3,369.7L344.1,372.0L343.8,374.5L343.3,377.0L342.8,379.4L342.2,381.6L341.5,383.6L340.8,385.5L339.9,387.3L339.0,388.9L338.0,390.5L337.0,392.0L336.0,393.3L335.0,394.6L334.0,395.7L332.8,396.7L331.3,397.6L329.5,398.5L327.2,399.3L324.5,400.1L321.5,400.7L318.4,401.3L315.3,401.7L312.3,402.0L309.4,402.1L306.4,402.0L303.3,401.9L300.4,401.6L297.6,401.3L295.1,401.0L292.8,400.8L290.7,400.7L288.8,400.6L287.0,400.3L285.3,399.7L283.7,398.8L282.1,397.5L280.7,395.9L279.4,394.0L278.1,391.9L276.8,389.7L275.6,387.3L274.3,384.7L273.0,381.9L271.8,378.9L270.6,375.9L269.6,372.9L268.8,370.1L268.2,367.4L267.9,364.6L267.6,361.9L267.5,359.3L267.5,357.1L267.6,355.2L267.8,353.8L268.2,352.7L268.7,352.0L269.2,351.4L269.6,351.0L269.9,350.6ZM366.9,361.0L369.0,359.7L371.8,357.9L375.2,355.8L378.9,353.6L382.7,351.6L386.4,350.1L390.0,349.1L393.8,348.3L397.6,347.7L401.5,347.3L405.4,346.9L409.3,346.6L413.3,346.3L417.6,346.1L421.8,346.0L425.8,346.0L429.4,346.0L432.3,346.1L434.4,346.2L436.0,346.3L437.1,346.5L437.9,346.9L438.6,347.4L439.2,348.3L439.8,349.5L440.2,350.9L440.5,352.6L440.6,354.4L440.5,356.5L440.3,358.7L439.9,361.2L439.2,364.1L438.4,367.1L437.5,370.2L436.6,373.2L435.7,375.9L434.9,378.5L434.0,381.0L433.2,383.4L432.3,385.7L431.2,387.8L430.0,389.6L428.7,391.2L427.2,392.5L425.7,393.7L424.0,394.7L422.1,395.6L420.0,396.5L417.6,397.3L415.0,398.1L412.2,398.8L409.4,399.4L406.5,399.8L403.6,400.0L400.7,400.0L397.8,399.7L394.8,399.3L391.8,398.7L389.0,398.1L386.4,397.5L383.9,396.9L381.6,396.2L379.4,395.5L377.3,394.7L375.3,393.7L373.5,392.5L371.8,391.1L370.3,389.4L368.9,387.6L367.7,385.7L366.6,383.7L365.8,381.6L365.2,379.4L364.8,377.0L364.6,374.4L364.5,372.0L364.5,369.7L364.6,367.8L364.8,366.2L365.2,364.8L365.7,363.5L366.2,362.5L366.6,361.7L366.9,361.0Z"/>
<g fill="#151515"><path d="M309.0,355.5L310.2,356.0L312.0,356.7L314.0,357.6L316.1,358.6L318.0,359.7L319.5,361.0L320.6,362.5L321.4,364.2L322.1,366.0L322.5,368.0L322.8,370.0L323.0,372.0L322.9,374.2L322.6,376.6L322.0,379.1L321.4,381.4L320.9,383.5L320.5,385.0L320.4,386.0L320.4,386.6L320.6,386.9L320.6,387.0L320.3,386.9L319.5,386.8L318.2,386.6L316.3,386.2L314.2,385.7L312.0,385.0L309.8,384.3L308.0,383.5L306.4,382.6L304.9,381.7L303.5,380.7L302.2,379.5L301.0,378.3L300.0,377.0L299.0,375.5L298.2,373.9L297.4,372.2L296.8,370.4L296.4,368.6L296.3,367.0L296.4,365.4L296.8,363.7L297.4,362.0L298.1,360.5L299.0,359.1L300.0,358.0L301.3,357.2L302.9,356.6L304.7,356.2L306.5,355.9L308.0,355.7L309.0,355.5Z"/><path d="M400.0,356.4L398.9,356.8L397.4,357.4L395.6,358.0L393.8,358.8L392.2,359.8L391.0,361.0L390.2,362.4L389.6,364.1L389.1,366.0L388.9,367.9L388.7,370.0L388.7,372.0L388.8,374.2L389.2,376.6L389.6,379.1L390.2,381.4L390.6,383.5L391.0,385.0L391.1,386.0L391.1,386.6L391.0,386.9L391.0,387.0L391.3,386.9L392.0,386.8L393.3,386.6L395.0,386.2L397.1,385.7L399.2,385.0L401.2,384.3L403.0,383.5L404.6,382.6L406.0,381.7L407.4,380.7L408.7,379.5L409.9,378.3L411.0,377.0L412.0,375.5L412.9,373.9L413.8,372.1L414.4,370.4L414.8,368.6L415.0,367.0L414.9,365.4L414.5,363.8L413.9,362.3L413.1,360.8L412.2,359.5L411.0,358.5L409.4,357.8L407.4,357.2L405.2,356.9L403.1,356.7L401.3,356.6L400.0,356.4Z"/></g>
<g fill="#fff"><circle cx="310" cy="366.9" r="3.9"/><circle cx="306" cy="375.8" r="2.2"/><circle cx="400.2" cy="367.3" r="3.9"/><circle cx="404.2" cy="375.9" r="2.2"/></g>
<path fill="#151515" d="M352.7,433.2 C347,431.5 338,428.5 334.5,423.5 C332.3,419.5 335.5,416.5 340,417.5 C345,418.8 349.5,422.5 352.7,425.5 C355.9,422.5 360.4,418.8 365.4,417.5 C369.9,416.5 373.1,419.5 370.9,423.5 C367.4,428.5 358.4,431.5 352.7,433.2Z"/>
<path fill="#151515" d="M271.4,394.0L270.6,393.9L269.4,393.6L268.3,393.9L267.2,394.4L266.1,395.0L265.1,395.6L264.2,396.3L263.3,397.0L262.5,397.7L262.1,398.7L262.1,399.7L261.9,400.4L262.1,400.6L262.8,400.5L263.8,400.4L264.8,400.2L265.5,399.5L266.2,398.9L266.9,398.4L267.7,397.9L268.7,397.4L269.7,396.9L270.6,396.2L271.2,395.1L271.6,394.4ZM265.1,403.4L264.5,403.4L263.5,403.0L262.5,403.1L261.7,403.5L260.8,404.1L260.0,404.7L259.2,405.4L258.4,406.2L257.6,407.0L257.2,407.9L257.2,409.1L257.2,409.8L257.4,410.0L258.2,409.9L259.3,409.8L260.1,409.2L260.8,408.5L261.5,407.8L262.0,407.3L262.6,406.9L263.4,406.5L264.1,406.0L264.7,405.3L265.0,404.3L265.3,403.8ZM260.4,416.1L259.8,416.0L258.8,415.8L257.9,416.0L257.2,416.6L256.5,417.2L255.8,417.8L255.2,418.5L254.6,419.2L254.0,420.0L253.8,420.8L254.0,421.9L254.1,422.5L254.3,422.7L255.0,422.5L256.0,422.4L256.7,422.0L257.2,421.3L257.7,420.7L258.2,420.2L258.7,419.7L259.3,419.2L259.9,418.7L260.4,418.0L260.5,416.9L260.6,416.3ZM263.6,421.6L262.6,421.4L261.2,421.0L259.8,421.1L258.3,421.5L256.8,421.9L255.4,422.4L254.1,423.0L252.8,423.6L251.5,424.3L250.5,425.3L249.9,426.5L249.4,427.1L249.6,427.5L250.5,427.4L251.8,427.5L253.1,427.3L254.3,426.6L255.5,426.1L256.6,425.6L257.8,425.1L259.2,424.7L260.6,424.3L261.9,423.7L262.9,422.6L263.6,422.0ZM263.4,430.3L262.9,430.7L262.0,431.2L261.3,431.8L261.0,432.7L260.7,433.6L260.4,434.5L260.1,435.4L259.8,436.3L259.5,437.3L259.6,438.2L260.1,439.2L260.3,439.8L260.7,440.0L261.2,439.5L262.2,439.0L262.8,438.2L263.0,437.3L263.3,436.4L263.6,435.5L263.9,434.7L264.2,433.8L264.5,433.0L264.4,432.0L263.9,431.1L263.8,430.5ZM266.7,439.8L265.9,439.9L264.7,439.8L263.5,440.3L262.6,441.1L261.6,442.0L260.7,442.9L260.0,443.9L259.3,445.0L258.7,446.1L258.5,447.3L258.7,448.4L258.7,449.2L259.1,449.4L259.7,449.0L260.8,448.5L261.6,447.7L262.2,446.7L262.7,445.8L263.3,445.1L263.9,444.4L264.7,443.7L265.6,442.9L266.3,442.0L266.6,440.8L266.9,440.0ZM271.3,444.7L271.3,445.5L271.0,446.8L270.9,448.3L271.4,449.7L271.9,451.2L272.4,452.6L273.1,454.1L273.8,455.7L274.5,457.4L275.4,458.8L276.8,459.7L277.6,460.5L278.0,460.3L277.9,459.2L278.1,457.6L277.6,456.0L276.8,454.3L276.1,452.8L275.6,451.4L275.1,450.0L274.6,448.6L274.1,447.3L273.2,446.1L272.2,445.2L271.7,444.5ZM280.9,462.1L280.6,463.5L281.1,464.7L282.1,465.8L283.0,467.0L284.2,467.6L285.6,467.6L285.8,467.4L286.1,466.0L285.6,464.8L284.6,463.7L283.7,462.5L282.5,461.9L281.1,461.9ZM288.8,466.0L289.0,466.7L289.1,467.7L289.6,468.6L290.4,469.2L291.3,469.9L292.2,470.5L293.1,471.0L294.2,471.5L295.2,471.9L296.3,472.1L297.5,471.7L298.2,471.6L298.4,471.2L297.9,470.6L297.4,469.5L296.6,468.9L295.6,468.4L294.6,468.0L293.8,467.5L293.1,467.1L292.4,466.6L291.7,466.0L290.7,465.8L289.7,465.8L289.0,465.8ZM299.8,468.4L300.0,469.1L300.1,470.2L300.7,471.0L301.5,471.6L302.2,472.3L303.0,472.8L303.6,473.4L304.4,474.0L305.1,474.5L306.0,474.8L307.0,474.7L307.7,474.7L307.9,474.5L307.7,473.8L307.6,472.8L307.2,472.0L306.5,471.4L305.8,470.8L305.0,470.2L304.3,469.6L303.5,469.0L302.7,468.4L301.8,468.0L300.7,468.2L300.0,468.2ZM310.8,470.8L311.2,471.4L311.6,472.4L312.2,473.3L313.2,473.9L314.2,474.5L315.3,475.0L316.3,475.5L317.5,476.0L318.7,476.5L319.9,476.7L321.1,476.4L321.9,476.3L322.1,475.9L321.6,475.3L321.0,474.1L320.0,473.4L318.8,472.9L317.7,472.5L316.7,472.0L315.8,471.5L314.9,471.0L313.9,470.4L312.8,470.3L311.7,470.5L311.0,470.4ZM325.0,473.2L325.4,473.8L325.7,474.9L326.5,475.6L327.4,476.1L328.4,476.6L329.3,477.0L330.1,477.4L331.0,477.9L331.9,478.3L332.9,478.3L333.9,478.0L334.5,477.9L334.7,477.5L334.3,477.0L334.0,476.0L333.3,475.2L332.5,474.8L331.6,474.4L330.7,474.0L329.9,473.6L329.0,473.1L328.0,472.6L327.0,472.4L325.9,472.7L325.2,472.8ZM337.6,474.8L338.2,475.4L339.0,476.4L340.0,477.0L341.2,477.4L342.4,477.8L343.5,478.1L344.6,478.4L345.7,478.8L346.9,479.2L348.0,479.2L349.2,478.8L349.9,478.7L350.1,478.3L349.5,477.8L348.9,476.7L347.9,476.0L346.8,475.6L345.6,475.3L344.5,474.9L343.4,474.5L342.2,474.2L341.0,473.8L339.7,473.8L338.6,474.2L337.8,474.4ZM293.6,450.3L294.3,451.3L295.7,451.9L297.3,452.3L298.9,452.6L300.3,452.5L301.5,451.9L301.5,451.5L300.8,450.5L299.4,449.9L297.8,449.5L296.2,449.2L294.8,449.3L293.6,449.9ZM299.9,455.1L300.5,456.0L301.6,456.5L302.9,456.6L304.2,456.8L305.3,456.5L306.2,455.8L306.2,455.4L305.6,454.5L304.5,454.0L303.2,453.9L301.9,453.7L300.8,454.0L299.9,454.7ZM309.3,460.6L310.0,461.3L310.9,461.5L311.9,461.4L312.8,461.2L313.6,460.7L314.0,459.8L314.0,459.4L313.3,458.7L312.4,458.5L311.4,458.6L310.5,458.8L309.7,459.3L309.3,460.2ZM380.1,473.2L380.7,473.3L381.7,473.7L382.5,473.6L383.3,473.2L384.0,472.8L384.6,472.6L385.2,472.3L385.9,472.1L386.6,471.9L387.2,471.3L387.5,470.4L387.8,470.0L387.8,469.6L387.2,469.4L386.5,468.9L385.7,468.7L384.9,468.9L384.1,469.2L383.4,469.4L382.6,469.8L381.8,470.2L381.0,470.6L380.4,471.2L380.2,472.2L379.9,472.8ZM389.5,471.6L390.3,471.6L391.5,471.9L392.6,471.6L393.7,471.0L394.8,470.5L395.8,470.0L396.7,469.5L397.7,469.0L398.8,468.5L399.6,467.7L400.1,466.7L400.5,466.1L400.3,465.7L399.6,465.7L398.5,465.4L397.3,465.5L396.3,466.0L395.2,466.5L394.2,467.0L393.2,467.5L392.2,468.1L391.1,468.6L390.2,469.4L389.7,470.6L389.3,471.2ZM402.1,468.4L402.9,468.4L404.1,468.6L405.1,468.2L406.1,467.6L407.1,467.0L407.9,466.4L408.8,465.8L409.6,465.3L410.5,464.7L411.0,463.8L411.3,462.8L411.6,462.1L411.4,461.9L410.7,461.9L409.7,461.7L408.6,461.9L407.8,462.5L406.9,463.0L406.1,463.6L405.2,464.2L404.3,464.8L403.3,465.4L402.5,466.3L402.2,467.4L401.9,468.2ZM413.1,464.4L413.9,464.4L415.0,464.6L416.1,464.3L417.1,463.7L418.1,463.0L419.0,462.3L419.9,461.7L420.8,460.9L421.7,460.2L422.2,459.2L422.4,458.0L422.6,457.3L422.4,457.1L421.6,457.2L420.5,457.2L419.5,457.6L418.6,458.3L417.8,459.0L417.0,459.7L416.2,460.2L415.3,460.9L414.3,461.5L413.6,462.3L413.2,463.5L412.9,464.2ZM429.0,462.1L429.6,461.6L430.7,461.1L431.7,460.2L432.3,459.1L432.9,457.9L433.5,456.7L434.1,455.6L434.7,454.3L435.3,453.0L435.6,451.6L435.3,450.3L435.3,449.4L434.9,449.2L434.2,449.8L433.0,450.5L432.2,451.6L431.6,452.9L431.0,454.1L430.5,455.3L429.9,456.3L429.3,457.5L428.7,458.6L428.5,459.9L428.7,461.1L428.6,461.9ZM435.0,394.4L435.4,395.0L435.8,396.1L436.4,396.9L437.4,397.4L438.3,397.9L439.1,398.4L439.9,398.9L440.7,399.6L441.6,400.2L442.6,400.6L443.7,400.6L444.5,400.6L444.7,400.4L444.5,399.7L444.3,398.5L443.6,397.6L442.7,396.9L441.8,396.2L440.9,395.6L440.0,395.0L439.0,394.5L438.1,393.9L437.0,393.7L435.9,394.0L435.2,394.0ZM438.2,403.8L438.7,404.4L439.2,405.5L440.1,406.3L441.2,406.9L442.2,407.4L443.2,408.0L444.1,408.5L445.1,409.1L446.1,409.8L447.2,410.1L448.4,410.0L449.2,410.0L449.4,409.8L449.0,409.1L448.7,407.9L447.9,407.0L446.9,406.3L445.8,405.6L444.8,405.0L443.8,404.5L442.7,403.9L441.6,403.3L440.4,403.1L439.2,403.4L438.4,403.4ZM442.9,419.6L443.4,420.2L443.9,421.4L444.7,422.4L445.9,423.1L447.0,423.8L448.1,424.4L449.2,425.1L450.5,425.9L451.8,426.8L453.1,427.4L454.5,427.3L455.5,427.4L455.7,427.2L455.2,426.3L454.7,425.0L453.6,424.0L452.3,423.1L451.0,422.3L449.9,421.6L448.8,420.9L447.6,420.2L446.4,419.5L445.2,419.2L443.9,419.3L443.1,419.2ZM439.7,432.1L439.6,432.9L439.5,434.1L439.8,435.1L440.4,436.1L441.0,437.1L441.6,437.9L442.2,438.8L442.8,439.7L443.4,440.5L444.3,441.1L445.3,441.3L446.0,441.6L446.2,441.4L446.2,440.7L446.3,439.6L446.1,438.6L445.5,437.8L444.9,436.9L444.4,436.1L443.8,435.2L443.2,434.3L442.6,433.3L441.8,432.6L440.7,432.2L439.9,431.9ZM438.1,440.0L437.9,440.6L437.5,441.5L437.5,442.4L437.8,443.1L438.2,443.9L438.4,444.6L438.7,445.3L439.0,446.0L439.2,446.7L439.9,447.3L440.7,447.6L441.2,447.9L441.6,447.7L441.8,447.2L442.2,446.4L442.4,445.6L442.1,444.8L441.8,444.1L441.6,443.4L441.3,442.7L440.9,441.9L440.6,441.1L440.0,440.4L439.0,440.1L438.5,439.8ZM425.6,446.3L425.7,447.1L425.8,448.4L426.2,449.7L427.0,450.8L427.8,451.9L428.7,453.0L429.5,454.2L430.5,455.5L431.5,456.8L432.6,457.9L434.0,458.4L435.0,458.9L435.2,458.7L435.0,457.7L434.9,456.1L434.2,454.8L433.2,453.4L432.2,452.1L431.3,451.0L430.5,449.9L429.7,448.8L428.9,447.7L427.7,447.0L426.6,446.5L425.8,446.1ZM432.1,455.7L432.7,455.7L433.7,455.9L434.4,455.7L435.0,455.2L435.5,454.7L436.0,454.3L436.5,454.0L437.1,453.6L437.7,453.2L438.1,452.6L438.2,451.6L438.4,451.0L438.2,450.8L437.6,450.6L436.8,450.3L436.0,450.4L435.3,450.8L434.6,451.2L434.0,451.7L433.4,452.1L432.8,452.7L432.2,453.2L431.9,453.9L431.9,454.9L431.9,455.5ZM428.8,409.4L429.5,410.1L430.5,411.3L431.9,412.0L433.5,412.5L435.0,412.9L436.4,413.4L437.7,413.8L439.1,414.4L440.5,415.0L442.0,415.2L443.5,414.9L444.5,414.9L444.7,414.5L444.0,413.7L443.3,412.4L442.1,411.4L440.6,410.8L439.1,410.2L437.6,409.6L436.1,409.2L434.5,408.7L432.9,408.3L431.3,408.2L429.9,408.8L428.8,409.0ZM409.8,424.2L409.9,425.4L410.5,426.3L411.4,426.9L412.4,427.6L413.4,427.8L414.5,427.4L414.7,427.2L414.6,426.0L414.0,425.1L413.1,424.5L412.1,423.8L411.1,423.6L410.0,424.0ZM406.8,432.2L407.9,432.6L409.2,432.4L410.5,431.8L411.8,431.1L412.7,430.2L413.1,429.1L412.9,428.7L411.8,428.3L410.5,428.5L409.2,429.1L407.9,429.8L407.0,430.7L406.6,431.8ZM403.6,435.4L404.6,436.1L405.8,436.2L407.1,435.8L408.4,435.5L409.4,434.8L409.9,433.8L409.9,433.4L408.9,432.7L407.7,432.6L406.4,433.0L405.1,433.3L404.1,434.0L403.6,435.0ZM403.6,444.8L404.6,445.5L405.8,445.6L407.1,445.2L408.4,444.9L409.4,444.2L409.9,443.2L409.9,442.8L408.9,442.1L407.7,442.0L406.4,442.4L405.1,442.7L404.1,443.4L403.6,444.4ZM397.3,449.5L398.5,450.2L399.9,450.3L401.5,450.0L403.1,449.7L404.5,449.0L405.2,448.0L405.2,447.6L404.0,446.9L402.6,446.8L401.0,447.1L399.4,447.4L398.0,448.1L397.3,449.1ZM394.2,457.4L395.6,457.9L397.4,457.7L399.3,457.0L401.2,456.4L402.8,455.5L403.7,454.3L403.5,453.9L402.1,453.4L400.3,453.6L398.4,454.3L396.5,454.9L394.9,455.8L394.0,457.0ZM268.4,407.2L270.8,407.6L274.1,408.4L278.0,409.1L282.1,409.6L286.2,410.2L289.8,411.0L293.1,412.0L296.5,413.2L299.9,414.6L303.1,415.6L305.8,416.5L307.7,417.2L307.9,416.8L306.0,415.9L303.6,414.4L300.6,412.8L297.2,411.4L293.7,410.1L290.2,409.0L286.6,408.2L282.4,407.6L278.2,407.1L274.2,406.9L270.8,406.9L268.4,406.8ZM257.3,414.1L260.6,413.8L265.3,413.7L270.8,413.5L276.6,413.0L282.1,412.6L287.0,412.5L291.2,412.7L295.2,413.1L299.0,413.7L302.7,414.4L306.2,415.1L309.7,416.0L313.3,417.0L317.0,418.2L320.7,419.2L324.1,420.3L326.9,421.2L328.9,422.0L329.1,421.6L327.0,420.9L324.4,419.5L321.2,418.0L317.6,416.4L313.9,415.1L310.3,414.0L306.7,413.2L303.1,412.4L299.3,411.7L295.4,411.1L291.3,410.7L287.0,410.5L282.1,410.6L276.4,410.9L270.6,411.5L265.2,412.4L260.6,413.3L257.3,413.7ZM249.6,427.5L251.7,426.7L254.8,425.7L258.4,424.6L262.4,423.5L266.3,422.4L270.2,421.5L274.0,420.9L278.0,420.5L282.2,420.3L286.4,420.2L290.7,420.2L294.9,420.4L299.5,420.8L304.5,421.5L309.5,422.1L314.3,422.6L318.3,423.0L321.2,423.5L321.2,423.1L318.4,422.6L314.5,421.6L309.8,420.4L304.8,419.5L299.7,418.8L295.1,418.4L290.7,418.2L286.4,418.2L282.1,418.3L277.9,418.5L273.8,418.9L269.8,419.5L265.8,420.4L261.8,421.7L257.9,423.3L254.5,424.9L251.6,426.3L249.4,427.1ZM259.0,449.4L261.3,447.5L264.6,445.0L268.5,442.0L272.7,438.9L276.7,436.0L280.4,433.9L284.0,432.5L287.5,431.5L291.1,430.8L294.8,430.4L298.8,430.2L303.0,430.0L307.9,430.0L313.5,430.4L319.4,430.8L324.9,431.0L329.6,431.1L333.0,431.4L333.0,431.0L329.7,430.7L325.0,429.8L319.5,428.9L313.7,428.3L308.0,428.0L303.0,428.0L298.7,428.2L294.7,428.4L290.8,428.8L287.0,429.5L283.3,430.6L279.6,432.1L275.6,434.3L271.4,437.3L267.5,440.8L264.0,444.2L261.0,447.2L258.8,449.2ZM279.5,451.9L281.8,450.6L285.2,449.1L288.9,447.1L292.9,444.8L296.8,442.6L300.4,440.9L304.0,439.6L307.8,438.5L311.7,437.5L315.3,436.3L318.2,435.2L320.4,434.6L320.4,434.2L318.1,434.7L315.0,435.0L311.2,435.5L307.3,436.5L303.3,437.7L299.6,439.1L295.9,440.8L291.9,443.0L287.9,445.3L284.3,447.8L281.5,450.1L279.3,451.5ZM436.7,412.9L434.7,412.6L431.9,411.9L428.6,411.1L425.0,410.3L421.3,409.9L417.8,409.7L414.5,409.6L411.1,409.6L407.6,409.7L404.1,410.0L400.6,410.5L397.0,411.3L393.2,412.6L389.1,414.3L385.0,416.3L381.3,418.5L378.2,420.5L375.9,421.6L376.1,422.0L378.4,420.9L381.8,419.5L385.8,418.0L389.9,416.2L393.9,414.5L397.6,413.3L401.0,412.5L404.4,412.0L407.8,411.8L411.1,411.7L414.5,411.7L417.8,411.7L421.2,411.9L424.8,412.3L428.4,412.5L431.8,412.8L434.6,413.0L436.7,413.3ZM451.0,419.2L449.3,418.5L447.2,417.2L444.7,415.7L441.8,414.1L438.6,413.0L435.3,412.1L431.9,411.5L428.1,411.0L424.1,410.6L420.2,410.4L416.4,410.4L412.9,410.5L409.6,410.9L406.5,411.7L403.6,412.9L401.0,414.1L398.9,415.2L397.2,415.7L397.4,416.1L399.0,415.5L401.3,414.9L404.0,414.3L407.0,413.6L410.0,412.9L413.1,412.5L416.4,412.4L420.1,412.4L424.0,412.6L427.8,413.0L431.6,413.5L434.9,414.1L438.0,414.9L441.0,416.0L444.1,417.0L446.9,418.0L449.2,418.8L450.8,419.6ZM454.0,427.1L451.3,426.3L447.5,425.0L443.1,423.4L438.3,422.1L433.4,420.9L429.0,420.0L424.9,419.3L420.9,418.7L416.9,418.2L412.9,417.8L409.0,417.6L405.2,417.6L401.2,417.9L397.0,418.5L392.9,419.5L389.2,420.6L386.2,421.6L383.9,422.0L383.9,422.4L386.2,421.9L389.4,421.5L393.2,421.0L397.3,420.5L401.4,419.9L405.2,419.6L409.0,419.6L412.8,419.8L416.6,420.2L420.6,420.7L424.6,421.3L428.6,422.0L433.0,422.9L437.8,424.0L442.6,425.2L447.3,426.0L451.2,426.8L454.0,427.5ZM452.5,444.4L449.6,442.7L445.8,440.0L441.3,436.9L436.2,433.9L431.0,431.3L426.0,429.4L421.2,428.3L416.4,427.6L411.5,427.2L406.6,427.0L401.9,427.0L397.3,427.1L392.5,427.3L387.6,427.7L382.8,428.5L378.4,429.4L374.7,430.2L372.0,430.5L372.0,430.9L374.7,430.5L378.5,430.3L383.0,430.0L387.8,429.7L392.7,429.3L397.3,429.1L401.9,429.1L406.6,429.1L411.4,429.2L416.1,429.6L420.8,430.3L425.4,431.4L430.2,433.2L435.2,435.7L440.4,438.4L445.3,440.9L449.4,443.1L452.3,444.8ZM439.9,460.3L438.2,459.0L436.1,457.1L433.6,454.8L430.7,452.5L427.6,450.3L424.6,448.4L421.7,446.7L418.6,445.1L415.5,443.4L412.2,441.9L408.9,440.4L405.6,439.0L401.9,437.5L397.8,436.1L393.6,434.9L389.7,434.0L386.3,433.3L384.0,432.6L383.8,433.0L386.2,433.8L389.4,435.1L393.1,436.6L397.2,438.1L401.2,439.5L404.8,440.8L408.1,442.2L411.4,443.7L414.5,445.3L417.7,446.9L420.7,448.5L423.6,450.2L426.5,452.0L429.6,454.1L432.7,456.0L435.6,457.8L438.0,459.3L439.7,460.5ZM295.2,427.5L295.6,427.9L296.2,428.8L297.0,429.3L297.9,429.5L298.7,429.7L299.5,430.0L300.3,430.2L301.1,430.6L302.0,430.9L302.9,431.0L303.9,430.7L304.5,430.6L304.7,430.2L304.3,429.7L303.9,428.8L303.2,428.1L302.3,427.7L301.4,427.4L300.5,427.0L299.6,426.8L298.6,426.5L297.7,426.3L296.7,426.4L295.8,426.9L295.2,427.1ZM299.8,433.8L300.2,434.3L300.7,435.1L301.3,435.8L302.2,436.2L303.0,436.5L303.8,436.9L304.6,437.3L305.5,437.8L306.4,438.3L307.4,438.7L308.5,438.5L309.2,438.5L309.4,438.1L309.1,437.5L308.7,436.4L308.0,435.7L307.0,435.1L306.1,434.6L305.2,434.1L304.3,433.7L303.4,433.3L302.5,432.9L301.5,433.0L300.6,433.3L300.0,433.4ZM303.0,440.1L303.2,440.4L303.6,441.2L304.0,441.7L304.6,441.8L305.1,441.9L305.6,442.0L306.2,442.1L306.8,442.3L307.4,442.5L308.0,442.5L308.8,441.9L309.2,441.7L309.4,441.3L309.1,440.9L308.8,440.0L308.3,439.6L307.6,439.4L307.0,439.2L306.4,439.0L305.8,438.9L305.2,438.7L304.6,438.6L304.0,438.9L303.4,439.5L303.0,439.7ZM257.4,447.9L258.0,447.8L259.0,447.8L259.9,447.5L260.6,446.9L261.3,446.2L262.0,445.7L262.6,445.2L263.4,444.6L264.2,444.1L264.8,443.3L265.0,442.3L265.3,441.6L265.1,441.4L264.4,441.4L263.4,441.2L262.4,441.5L261.6,442.1L260.8,442.7L260.0,443.3L259.3,443.9L258.6,444.5L257.8,445.2L257.4,446.1L257.4,447.1L257.2,447.7ZM261.9,443.1L262.0,443.7L262.0,444.6L262.2,445.4L262.8,446.0L263.4,446.5L263.9,447.1L264.5,447.7L265.2,448.3L265.8,448.9L266.6,449.4L267.6,449.3L268.3,449.4L268.5,449.2L268.4,448.5L268.4,447.5L268.0,446.7L267.3,446.1L266.7,445.5L266.1,444.9L265.5,444.4L264.9,443.8L264.4,443.2L263.6,443.0L262.7,443.0L262.1,442.9ZM249.6,427.5L250.4,427.4L251.6,427.6L252.9,427.4L254.1,426.9L255.3,426.4L256.5,426.0L257.7,425.6L259.1,425.2L260.6,424.9L261.9,424.3L262.9,423.3L263.6,422.8L263.6,422.4L262.6,422.3L261.3,421.8L259.9,421.9L258.4,422.2L256.9,422.6L255.5,423.0L254.2,423.5L252.9,424.1L251.6,424.6L250.7,425.5L250.0,426.5L249.4,427.1ZM252.7,430.5L253.4,430.5L254.4,430.6L255.4,430.3L256.2,429.8L257.0,429.3L257.7,428.9L258.4,428.5L259.3,428.2L260.3,427.9L261.1,427.3L261.6,426.4L262.1,425.9L261.9,425.5L261.3,425.4L260.3,425.0L259.3,425.0L258.3,425.3L257.3,425.7L256.3,426.1L255.4,426.6L254.5,427.2L253.6,427.8L253.0,428.6L252.8,429.6L252.5,430.3ZM262.1,400.6L262.8,400.4L264.0,400.3L265.1,399.9L266.0,399.2L267.0,398.4L267.9,397.8L268.9,397.1L270.0,396.3L271.1,395.6L272.1,394.7L272.6,393.5L273.1,392.7L272.9,392.5L272.0,392.6L270.7,392.5L269.5,393.0L268.3,393.8L267.1,394.5L266.1,395.2L265.1,396.0L264.1,396.8L263.1,397.6L262.5,398.6L262.2,399.7L261.9,400.4ZM260.6,405.4L261.1,405.4L261.9,405.7L262.7,405.8L263.3,405.5L264.0,405.2L264.6,404.9L265.3,404.7L266.1,404.4L266.9,404.1L267.6,403.7L268.1,402.7L268.5,402.2L268.3,401.8L267.7,401.6L266.8,401.1L265.9,401.2L265.1,401.5L264.2,401.8L263.4,402.1L262.7,402.4L262.0,402.7L261.3,403.1L260.9,403.8L260.7,404.6L260.4,405.0ZM409.1,431.1L409.7,431.0L410.6,431.1L411.4,430.8L412.0,430.2L412.6,429.6L413.1,429.1L413.6,428.6L414.2,428.0L414.8,427.4L415.1,426.6L415.0,425.7L415.1,425.1L414.9,424.9L414.3,425.0L413.4,424.9L412.6,425.2L412.0,425.8L411.4,426.4L410.9,426.9L410.4,427.4L409.8,428.0L409.2,428.6L408.9,429.4L409.0,430.3L408.9,430.9ZM436.1,455.1L436.8,454.9L437.9,454.8L438.8,454.3L439.6,453.6L440.4,452.8L441.1,452.1L441.8,451.4L442.6,450.6L443.3,449.8L443.8,448.9L443.9,447.8L444.1,447.1L443.9,446.9L443.2,447.1L442.1,447.2L441.2,447.7L440.4,448.4L439.6,449.2L438.9,449.9L438.2,450.6L437.4,451.4L436.7,452.2L436.2,453.1L436.1,454.2L435.9,454.9ZM352.2,431.0L351.3,432.0L350.8,433.4L350.8,434.9L350.9,436.7L350.9,438.4L350.9,440.0L350.9,441.7L350.9,443.5L350.9,445.3L350.9,447.0L351.3,448.4L352.3,449.5L352.7,449.5L353.7,448.5L354.2,447.0L354.2,445.3L354.3,443.5L354.3,441.7L354.3,440.0L354.3,438.3L354.2,436.6L354.2,434.9L354.1,433.3L353.5,431.9L352.6,431.0ZM324.9,447.1L325.2,447.9L325.4,449.1L325.7,450.6L326.7,451.7L327.8,452.8L328.9,453.6L330.0,454.3L331.2,454.9L332.4,455.4L333.7,455.8L335.0,456.1L336.4,456.4L337.9,456.4L339.4,456.4L340.9,456.3L342.5,456.1L344.1,455.8L345.6,455.4L347.2,454.8L348.8,454.0L350.3,453.2L351.4,451.8L352.2,450.5L352.8,449.7L352.6,449.3L351.6,449.5L350.1,449.5L348.4,449.7L347.0,450.5L345.6,451.2L344.4,451.6L343.2,452.0L341.9,452.2L340.5,452.4L339.2,452.5L337.9,452.5L336.8,452.4L335.7,452.3L334.7,452.1L333.8,451.7L332.8,451.3L331.9,450.9L331.1,450.4L330.3,449.8L329.4,448.9L328.4,448.1L327.1,447.7L325.9,447.3L325.1,446.9ZM352.6,449.6L353.1,450.3L353.7,451.4L354.5,452.8L355.7,453.8L357.3,454.6L359.0,455.2L360.7,455.6L362.6,455.9L364.6,456.2L366.7,456.3L368.8,456.3L370.9,456.0L372.9,455.5L374.8,454.6L376.7,453.7L378.4,452.7L379.8,451.7L381.1,450.9L382.1,450.2L382.7,449.0L383.0,448.0L383.2,447.2L383.4,446.5L383.6,446.1L383.4,445.9L383.0,446.2L382.4,446.4L381.6,446.7L380.8,446.9L379.8,447.1L378.9,447.7L377.7,448.4L376.3,449.3L374.8,450.2L373.2,451.1L371.6,451.8L370.1,452.2L368.6,452.4L366.8,452.4L365.0,452.3L363.2,452.1L361.5,451.8L360.0,451.4L358.8,451.0L357.6,450.4L356.3,449.9L354.9,449.7L353.6,449.6L352.8,449.4ZM343.5,460.0L344.1,460.4L344.9,461.1L345.9,462.0L347.2,462.1L348.6,462.3L350.1,462.3L351.7,462.1L353.6,461.8L355.5,461.5L357.2,461.1L358.6,459.9L359.5,459.2L359.5,458.8L358.3,458.5L356.6,457.9L354.8,458.2L353.0,458.5L351.3,458.8L349.9,458.9L348.7,458.9L347.6,458.8L346.4,458.6L345.3,459.1L344.3,459.5L343.5,459.6ZM317.9,473.7L319.7,474.6L322.1,476.1L325.0,477.8L328.3,478.8L331.7,479.7L334.7,480.3L337.5,480.6L340.1,480.7L342.7,480.7L345.2,480.5L347.7,480.2L350.3,479.8L352.9,479.3L355.6,478.7L358.3,478.0L361.0,477.2L363.8,476.2L366.5,475.2L369.4,473.9L372.6,472.3L375.8,470.6L378.4,468.4L380.5,466.4L382.1,465.2L381.9,464.8L380.0,465.5L377.2,466.3L374.0,467.4L370.9,469.0L367.9,470.6L365.1,471.8L362.5,472.8L359.9,473.7L357.3,474.5L354.8,475.2L352.2,475.7L349.7,476.2L347.2,476.6L344.8,476.9L342.5,477.0L340.1,477.1L337.7,477.0L335.3,476.7L332.5,476.2L329.4,475.3L326.1,474.3L322.9,473.9L320.0,473.6L318.1,473.3ZM288.2,349.6L287.8,350.5L287.9,351.3L288.3,351.9L288.8,352.6L289.5,353.0L290.5,353.0L290.7,352.8L291.1,351.9L291.0,351.1L290.6,350.5L290.1,349.8L289.4,349.4L288.4,349.4ZM285.9,355.3L285.6,356.3L285.9,357.4L286.6,358.3L287.3,359.2L288.2,359.8L289.3,359.9L289.5,359.7L289.8,358.7L289.5,357.6L288.8,356.7L288.1,355.8L287.2,355.2L286.1,355.1ZM283.6,361.1L283.3,362.1L283.6,363.2L284.3,364.1L285.0,365.0L285.9,365.6L287.0,365.7L287.2,365.5L287.5,364.5L287.2,363.4L286.5,362.5L285.8,361.6L284.9,361.0L283.8,360.9ZM282.4,366.8L282.2,367.8L282.6,368.7L283.3,369.4L284.0,370.0L284.9,370.4L285.9,370.2L286.1,370.0L286.3,369.0L285.9,368.1L285.2,367.4L284.5,366.8L283.6,366.4L282.6,366.6ZM281.3,372.5L281.1,373.5L281.5,374.4L282.1,375.1L282.8,375.8L283.7,376.2L284.7,376.0L284.9,375.8L285.1,374.8L284.7,373.9L284.1,373.2L283.4,372.5L282.5,372.1L281.5,372.3ZM279.1,376.1L279.9,377.0L281.3,377.5L282.9,377.8L284.5,378.0L286.0,377.8L287.1,377.2L287.1,376.8L286.3,375.9L284.9,375.4L283.3,375.1L281.7,374.9L280.2,375.1L279.1,375.7ZM275.6,380.2L277.2,381.1L279.6,381.6L282.4,381.8L285.2,382.0L287.7,381.9L289.4,381.2L289.4,380.8L287.8,379.9L285.4,379.4L282.6,379.2L279.8,379.0L277.3,379.1L275.6,379.8ZM276.0,383.7L277.6,384.6L280.1,385.1L282.9,385.3L285.8,385.5L288.2,385.4L290.0,384.7L290.0,384.3L288.4,383.4L285.9,382.9L283.1,382.7L280.2,382.5L277.8,382.6L276.0,383.3ZM278.0,387.2L279.5,388.0L281.8,388.5L284.4,388.6L287.1,388.7L289.4,388.4L291.0,387.7L291.0,387.3L289.5,386.5L287.2,386.0L284.6,385.9L281.9,385.8L279.6,386.1L278.0,386.8ZM307.7,389.8L307.9,390.8L308.5,391.5L309.4,391.9L310.4,392.4L311.3,392.5L312.2,392.1L312.4,391.7L312.2,390.7L311.6,390.0L310.7,389.6L309.7,389.1L308.8,389.0L307.9,389.4ZM314.6,391.0L315.6,391.9L317.2,392.4L319.0,392.7L320.9,392.9L322.6,392.7L323.8,392.1L323.8,391.7L322.8,390.8L321.2,390.3L319.4,390.0L317.5,389.8L315.8,390.0L314.6,390.6ZM289.4,399.0L291.5,399.6L294.6,399.8L298.1,399.6L301.6,399.4L304.6,398.8L306.6,397.9L306.6,397.5L304.5,396.9L301.4,396.7L297.9,396.9L294.4,397.1L291.4,397.7L289.4,398.6ZM419.5,348.3L418.9,349.1L418.7,350.0L419.0,350.9L419.2,351.8L419.7,352.6L420.6,352.9L421.0,352.9L421.6,352.1L421.8,351.2L421.5,350.3L421.3,349.4L420.8,348.6L419.9,348.3ZM420.6,356.5L420.1,357.3L420.1,358.2L420.4,359.2L420.7,360.1L421.4,360.8L422.3,361.1L422.7,360.9L423.2,360.1L423.2,359.2L422.9,358.2L422.6,357.3L421.9,356.6L421.0,356.3ZM421.8,363.4L421.3,364.2L421.3,365.1L421.6,366.0L422.0,366.9L422.6,367.6L423.5,367.9L423.9,367.7L424.4,366.9L424.4,366.0L424.1,365.1L423.7,364.2L423.1,363.5L422.2,363.2ZM422.3,370.2L421.8,371.0L421.8,371.7L422.2,372.4L422.5,373.1L423.1,373.6L424.0,373.7L424.4,373.5L424.9,372.7L424.9,372.0L424.5,371.3L424.2,370.6L423.6,370.1L422.7,370.0ZM416.5,381.2L418.1,381.8L420.4,381.9L422.9,381.6L425.5,381.3L427.6,380.7L429.0,379.7L429.0,379.3L427.4,378.7L425.1,378.6L422.6,378.9L420.0,379.2L417.9,379.8L416.5,380.8ZM417.0,384.7L418.5,385.5L420.8,386.0L423.4,386.1L426.1,386.2L428.4,385.9L430.0,385.2L430.0,384.8L428.5,384.0L426.2,383.5L423.6,383.4L420.9,383.3L418.6,383.6L417.0,384.3ZM419.0,388.2L420.4,389.1L422.4,389.6L424.9,389.8L427.3,390.0L429.5,389.9L431.0,389.2L431.0,388.8L429.6,387.9L427.6,387.4L425.1,387.2L422.7,387.0L420.5,387.1L419.0,387.8ZM383.1,394.4L384.1,394.9L385.4,394.8L386.8,394.3L388.2,393.8L389.3,393.1L389.9,392.1L389.7,391.7L388.7,391.2L387.4,391.3L386.0,391.8L384.6,392.3L383.5,393.0L382.9,394.0ZM392.2,391.0L393.2,391.4L394.3,391.4L395.5,390.9L396.7,390.4L397.6,389.7L398.0,388.7L397.8,388.3L396.8,387.9L395.7,387.9L394.5,388.4L393.3,388.9L392.4,389.6L392.0,390.6ZM397.8,397.9L399.0,399.1L400.9,400.0L403.2,400.7L405.5,401.4L407.6,401.6L409.2,401.3L409.4,400.9L408.2,399.7L406.3,398.8L404.0,398.1L401.7,397.4L399.6,397.2L398.0,397.5ZM436.8,390.9L437.0,391.6L437.3,392.6L437.8,393.5L438.5,394.3L439.3,395.1L440.0,395.9L440.7,396.7L441.4,397.6L442.1,398.6L443.0,399.3L444.1,399.7L444.8,400.1L445.0,399.9L444.9,399.2L444.8,398.0L444.3,397.0L443.5,396.0L442.7,395.0L442.0,394.1L441.3,393.3L440.4,392.5L439.6,391.6L438.7,391.1L437.7,390.9L437.0,390.7ZM363.3,398.9L362.8,399.9L362.9,401.3L363.4,402.7L363.9,404.1L364.6,405.2L365.6,405.8L366.0,405.6L366.5,404.6L366.4,403.2L365.9,401.8L365.4,400.4L364.7,399.3L363.7,398.7ZM304.1,358.4L304.3,356.9L303.4,355.9L302.3,354.9L301.2,353.9L300.2,353.1L298.7,353.4L298.5,353.6L298.3,355.1L299.2,356.1L300.3,357.1L301.4,358.1L302.4,358.9L303.9,358.6ZM300.6,362.4L300.6,360.8L299.6,360.0L298.4,359.2L297.2,358.4L296.1,357.8L294.7,358.4L294.5,358.6L294.5,360.2L295.5,361.0L296.7,361.8L297.9,362.6L299.0,363.2L300.4,362.6ZM298.4,366.3L298.2,364.9L297.2,364.2L296.0,363.5L294.8,362.9L293.7,362.4L292.4,363.1L292.2,363.5L292.4,364.9L293.4,365.6L294.6,366.3L295.8,366.9L296.9,367.4L298.2,366.7ZM406.6,358.1L408.1,358.6L409.2,357.9L410.4,357.0L411.6,356.1L412.6,355.2L412.6,353.6L412.4,353.4L410.9,352.9L409.8,353.6L408.6,354.5L407.4,355.4L406.4,356.3L406.4,357.9ZM409.6,362.2L411.0,362.9L412.3,362.4L413.8,361.6L415.3,360.9L416.5,360.2L416.9,358.7L416.7,358.3L415.3,357.6L414.0,358.1L412.5,358.9L411.0,359.6L409.8,360.3L409.4,361.8ZM412.1,366.2L413.3,367.0L414.5,366.7L415.9,366.2L417.3,365.7L418.5,365.1L418.9,363.7L418.7,363.3L417.5,362.5L416.3,362.8L414.9,363.3L413.5,363.8L412.3,364.4L411.9,365.8Z"/>
<g fill="#151515"><circle cx="307.8" cy="417" r="1.8"/><circle cx="329" cy="421.8" r="1.8"/><circle cx="321.2" cy="423.3" r="1.8"/><circle cx="333" cy="431.2" r="1.8"/><circle cx="320.4" cy="434.4" r="1.8"/><circle cx="376" cy="421.8" r="1.8"/><circle cx="397.3" cy="415.9" r="1.8"/><circle cx="383.9" cy="422.2" r="1.8"/><circle cx="372" cy="430.7" r="1.8"/><circle cx="383.9" cy="432.8" r="1.8"/></g>
</g><clipPath id="cv"><rect x="203" y="156" width="603" height="426"/></clipPath></defs><g clip-path="url(#cv)"><use href="#bunny"/></g></svg>
<div id="topbar">
 <div class="gal">Gallery</div>
</div>
<svg width="1000" height="40" id="icons">
 <g fill="#141414"><circle cx="94" cy="18" r="13"/><circle cx="142.5" cy="18" r="13"/><circle cx="191" cy="18" r="13"/><circle cx="239.5" cy="18" r="13"/></g>
 <g fill="#b9b9b9" stroke="#b9b9b9">
  <!-- wrench -->
  <path d="M87.8,24 L94,17.8" stroke-width="2.7" stroke-linecap="round" fill="none"/>
  <circle cx="96.2" cy="15.6" r="4.4" stroke="none"/>
  <circle cx="98.2" cy="13.6" r="2.1" fill="#141414" stroke="none"/>
  <path d="M98.2,13.6 L102.5,9.3" stroke="#141414" stroke-width="4.2" fill="none"/>
  <!-- wand -->
  <path d="M138.5,24 L143.2,19.3" stroke-width="2.9" stroke-linecap="round" fill="none"/>
  <path d="M145.5,17 L147.9,14.6" stroke-width="2.9" stroke-linecap="round" fill="none"/>
  <path d="M139.4,11.3 Q139.7,14.9 143.3,15.2 Q139.7,15.5 139.4,19.1 Q139.1,15.5 135.5,15.2 Q139.1,14.9 139.4,11.3Z" stroke="none"/>
  <path d="M144.2,10.6 Q145.6,12.3 144.2,14.4 Q142.8,12.3 144.2,10.6Z" stroke="none"/>
  <!-- selection S -->
  <g stroke-width="2.3" stroke-linecap="round" fill="none">
   <path d="M190.6,13.3 L196.8,12.9"/>
   <path d="M189.5,16.4 L191.9,20.8"/>
   <path d="M185.2,23.9 L191.4,23.3"/>
  </g>
  <!-- transform arrow -->
  <path d="M233.6,24.6 L239.4,18.8" stroke-width="2.2" stroke-linecap="round" fill="none"/>
  <path d="M245.8,12 L234.4,17.2 L238.6,18.4 L240.6,23.4 Z" stroke="none"/>
  <!-- brush -->
  <path d="M757.2,7.6 C758.5,8.8 751,17 743.8,22.8 L742.6,21.6 C748.6,14.8 756,6.4 757.2,7.6Z" stroke="none"/>
  <path d="M742.8,22.6 C740.5,21.5 738,22.8 737,25 C736,27 735,28 733.8,29 C737,29.4 740.5,28.4 742,26.5 C743.2,25 743.6,23.6 742.8,22.6Z" stroke="none"/>
  <!-- smudge -->
  <path d="M809.2,7.2 L814,12.1 L812.4,13.9 C813.4,16 813.6,19.2 812.3,21.6 C811.2,23.8 808.6,25.8 806.2,26.1 C805.2,26.2 804.4,25.6 804.5,24.9 L808,20.4 L807.2,19.4 L798.9,28.2 C797.8,29.4 795.6,29.6 794.6,28.4 C793.9,27.5 794.1,26.2 794.8,25.3 L798.1,20.6 C796.7,18.8 796.4,15.8 797.4,13.5 C798.6,11.1 801,10 803.5,9.9 L807,9.7 Z" stroke="none"/>
  <!-- eraser -->
  <g transform="translate(862.6,18.6) rotate(-45)">
   <rect x="-12.2" y="-5.1" width="24.4" height="10.2" rx="2" stroke="none"/>
   <path d="M-5.6,-5.5 V5.5" stroke="#1c1c1c" stroke-width="1.1"/>
  </g>
 </g>
 <!-- dots -->
 <g fill="#9c9c9c"><circle cx="493.2" cy="10" r="2.2"/><circle cx="500" cy="10" r="2.2"/><circle cx="506.7" cy="10" r="2.2"/></g>
 <!-- layers icon -->
 <rect x="916.1" y="8" width="15.1" height="15.2" rx="2.6" fill="#2d66dc"/>
 <rect x="910.5" y="12.5" width="16.4" height="16.6" rx="2.8" fill="#2d66dc" stroke="#1c1c1c" stroke-width="0.8"/>
 <circle cx="979.8" cy="18.2" r="11.8" fill="#e6c6c6"/>
</svg>
<div id="sidebar">
 <div class="track" style="top:0;height:144px"></div>
 <div class="thumb" style="top:3px"></div>
 <div class="track" style="top:212px;height:143px"></div>
 <div class="thumb" style="top:293.5px"></div>
</div>
<svg width="40" height="600">
 <rect x="10.8" y="333.8" width="14" height="14" rx="3.5" fill="none" stroke="#a8a8a8" stroke-width="1.8"/>
 <g fill="none" stroke-width="2" stroke-linecap="round">
  <path d="M14.5,536 H20 A3.9,3.9 0 0 1 20,543.8 H11.8" stroke="#b4b4b4"/>
  <path d="M19.5,571 H14 A3.9,3.9 0 0 0 14,578.6 H23" stroke="#3c3c3c"/>
 </g>
 <path d="M10.2,536 L15,532.4 L15,539.6Z" fill="#b4b4b4"/>
 <path d="M24.2,571 L19.4,567.4 L19.4,574.6Z" fill="#3c3c3c"/>
</svg>
<div id="menu">
 <div class="mi" style="top:1px">Rename</div>
 <div class="mi" style="top:30.5px">Select</div>
 <div class="mi" style="top:61px">Copy</div>
 <div class="mi" style="top:91.5px">Fill Layer</div>
 <div class="mi" style="top:122px">Clear</div>
 <div class="mi" style="top:152.5px">Alpha Lock</div>
 <div class="mi" style="top:183px">Mask</div>
 <div class="mi" style="top:213.5px">Invert</div>
 <div class="mi" style="top:244px">Reference</div>
</div>
<div id="panel">
 <div style="position:absolute;left:0;top:108px;width:321px;height:54px;border-radius:0 0 9px 9px;background:linear-gradient(90deg,#2b2b2b 0,#292929 90px,#232323 150px,#1f1f1f 190px)"></div>
 <div class="ptitle">Layers</div>
 <div id="row1"></div>
 <div class="lt" style="left:85.8px;top:80px;color:#fff">Inserted Image</div>
 <div class="lt" style="left:259px;top:82px;color:#fff;font-size:10px">N</div>
 <div class="lt" style="left:85.8px;top:130px;color:#b0b0b0">Background colour</div>
</div>
<svg width="1000" height="698">
 <path d="M959.8,70.6 V86.6 M951.8,78.6 H967.8" stroke="#a8a8a8" stroke-width="1.5"/>
 <rect x="675.2" y="111.5" width="58.1" height="48.1" rx="4" fill="#2b2b2b"/>
 <clipPath id="thc"><rect x="675.2" y="111.5" width="58.1" height="48.1" rx="4"/></clipPath>
 <g clip-path="url(#thc)"><use href="#bunny" transform="matrix(0,0.21,-0.21,0,775.33,61.77)"/></g>
 <defs><linearGradient id="bgth" x1="0" x2="1"><stop offset="0" stop-color="#e9e9e9"/><stop offset="1" stop-color="#fafafa"/></linearGradient></defs>
 <rect x="675.2" y="167.8" width="58.6" height="35.6" rx="4" fill="url(#bgth)"/>
 <rect x="955.1" y="130.1" width="11.5" height="11.4" rx="2" fill="#d3e0fa"/>
 <path d="M957.8,135.8 L960.2,138.2 L964.2,133.6" fill="none" stroke="#3374ee" stroke-width="1.4"/>
 <rect x="955.1" y="180.4" width="11.5" height="11.6" rx="2" fill="#d8d8d8"/>
 <path d="M957.8,186.2 L960.2,188.6 L964.2,184" fill="none" stroke="#222" stroke-width="1.4"/>
 <!-- annotations -->
 <g fill="none" stroke="#e8434b" stroke-width="3" stroke-linecap="round" stroke-linejoin="round">
  <rect x="902" y="1.5" width="37.5" height="36.7" stroke-linecap="butt" stroke-linejoin="miter"/>
  <path d="M901.6,38.2 L867.5,73 M865,56.9 L867.5,73 L882.2,73"/>
  <rect x="673.6" y="108" width="315.2" height="57.8" stroke-width="2.6" stroke-linejoin="miter"/>
  <path d="M895.7,166.5 V257.7 M883.9,240.7 L895.7,257.7 L908.3,243.2"/>
  <rect x="576.6" y="91" width="70" height="20.6" stroke-width="2.5" stroke-linejoin="miter"/>
  <path d="M505.5,103.8 H556.3 M542.5,92.8 L556.3,103.8 L540.5,115.4" stroke-width="2.8"/>
 </g>
</svg>
<div class="ann" style="left:288.8px;top:80px">Tap on Copy</div>
<div class="ann" style="left:817px;top:264.5px;font-size:35.5px;line-height:36.6px">Double tap<br>the layer</div>
<div id="home"></div>
<svg width="1000" height="698"><path d="M993.5,681 C993.5,686 990.5,689.5 984.6,690.6" fill="none" stroke="#fff" stroke-width="3.4" stroke-linecap="round"/></svg>
</body></html>
